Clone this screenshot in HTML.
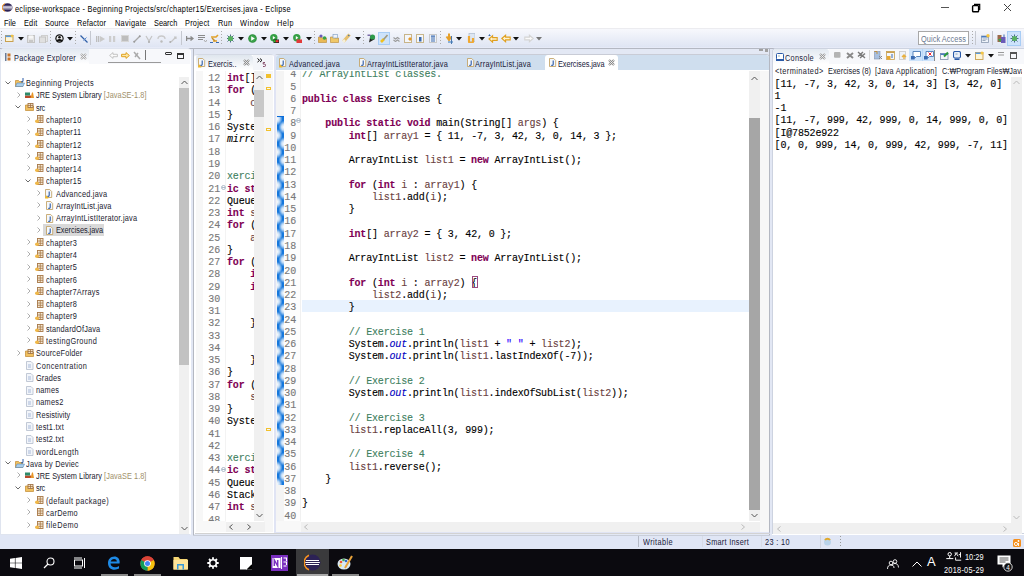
<!DOCTYPE html><html><head><meta charset="utf-8"><style>
*{margin:0;padding:0;box-sizing:border-box}
html,body{width:1024px;height:576px;overflow:hidden;background:#e2e7f4;position:relative}
.ui{position:absolute;font-family:"Liberation Sans", sans-serif;font-size:9px;letter-spacing:-0.5px;white-space:pre;line-height:12px;color:#000}
.mono{position:absolute;-webkit-text-stroke:0.12px currentColor;font-family:"Liberation Mono", monospace;font-size:10px;letter-spacing:-0.17px;white-space:pre;line-height:12.26px;color:#000}
.k{color:#7f0055;font-weight:bold}
.c{color:#3f7f5f}
.v{color:#6a3e3e}
.s{color:#2a00ff}
.f{color:#0000c0;font-style:italic}
.ln{color:#787878}
</style></head><body><div style="position:absolute;left:0px;top:0px;width:1024px;height:28px;background:#fff"></div><svg style="position:absolute;left:2px;top:3px" width="11" height="9" viewBox="0 0 11 9"><ellipse cx="5.5" cy="4.5" rx="5" ry="4.3" fill="#2c2255"/><path d="M1 3.3h9M0.6 4.6h9.8M1 5.9h9" stroke="#e9e7f0" stroke-width="0.9"/><path d="M3 0.6 A5 4.3 0 0 0 3 8.4" stroke="#f7941e" stroke-width="1" fill="none"/></svg><div class="ui" style="left:15px;top:2.7px;font-size:9.2px;letter-spacing:0.348px;transform:scaleX(0.8);transform-origin:0 0;">eclipse-workspace - Beginning Projects/src/chapter15/Exercises.java - Eclipse</div><div style="position:absolute;left:941px;top:7px;width:8px;height:1px;background:#555"></div><svg style="position:absolute;left:971px;top:3px" width="10" height="10" viewBox="0 0 10 10"><path d="M3 1.3h5.7v5.7" stroke="#000" stroke-width="1.2" fill="none"/><rect x="1.6" y="2.6" width="6" height="6.2" rx="0.8" stroke="#000" stroke-width="1.4" fill="none"/></svg><svg style="position:absolute;left:1003px;top:3px" width="9" height="9" viewBox="0 0 9 9"><path d="M1 1L8 8M8 1L1 8" stroke="#444" stroke-width="1"/></svg><div class="ui" style="left:4px;top:16.7px;font-size:9.2px;letter-spacing:0.048px;transform:scaleX(0.8);transform-origin:0 0;">File</div><div class="ui" style="left:23.5px;top:16.7px;font-size:9.2px;letter-spacing:0.260px;transform:scaleX(0.8);transform-origin:0 0;">Edit</div><div class="ui" style="left:45px;top:16.7px;font-size:9.2px;letter-spacing:0.147px;transform:scaleX(0.8);transform-origin:0 0;">Source</div><div class="ui" style="left:77px;top:16.7px;font-size:9.2px;letter-spacing:0.190px;transform:scaleX(0.8);transform-origin:0 0;">Refactor</div><div class="ui" style="left:114.6px;top:16.7px;font-size:9.2px;letter-spacing:0.372px;transform:scaleX(0.8);transform-origin:0 0;">Navigate</div><div class="ui" style="left:153.7px;top:16.7px;font-size:9.2px;letter-spacing:0.001px;transform:scaleX(0.8);transform-origin:0 0;">Search</div><div class="ui" style="left:185px;top:16.7px;font-size:9.2px;letter-spacing:0.307px;transform:scaleX(0.8);transform-origin:0 0;">Project</div><div class="ui" style="left:217.6px;top:16.7px;font-size:9.2px;letter-spacing:0.380px;transform:scaleX(0.8);transform-origin:0 0;">Run</div><div class="ui" style="left:239.5px;top:16.7px;font-size:9.2px;letter-spacing:0.698px;transform:scaleX(0.8);transform-origin:0 0;">Window</div><div class="ui" style="left:277px;top:16.7px;font-size:9.2px;letter-spacing:0.587px;transform:scaleX(0.8);transform-origin:0 0;">Help</div><div style="position:absolute;left:0px;top:28px;width:1024px;height:20px;background:linear-gradient(#f7f8fc,#dfe5f3);border-top:1px solid #ececf0;border-bottom:1px solid #e6eaf7"></div><div style="position:absolute;left:0px;top:48px;width:1024px;height:1px;background:#b2b6c1"></div><svg style="position:absolute;left:1px;top:31px" width="1" height="14" viewBox="0 0 1 14"><path d="M0.5 0v14" stroke="#aaa" stroke-width="1" stroke-dasharray="1 2"/></svg><svg style="position:absolute;left:5px;top:34px" width="9" height="8" viewBox="0 0 9 8"><rect x="0.5" y="1.5" width="7.5" height="6" fill="#fdf5d8" stroke="#c9a050" stroke-width="1"/><rect x="0.5" y="1.5" width="7.5" height="1.6" fill="#5a9ae0"/><path d="M7 0l0.6 1.2 1.3 0.2-1 0.9 0.3 1.3L7 3l-1.2 0.6 0.3-1.3-1-0.9 1.3-0.2z" fill="#f5c542"/></svg><svg style="position:absolute;left:17.5px;top:37px" width="6" height="4" viewBox="0 0 6 4"><path d="M0 0h6L3 3.5z" fill="#111"/></svg><svg style="position:absolute;left:27px;top:35px" width="8" height="8" viewBox="0 0 8 8"><rect x="0.5" y="0.5" width="7" height="7" fill="#e4e4e4" stroke="#c4c4c4"/><rect x="2" y="0.5" width="4" height="3" fill="#f6f6f6"/><rect x="2" y="5" width="4" height="2.5" fill="#c8c8c8"/></svg><svg style="position:absolute;left:39px;top:35px" width="9" height="8" viewBox="0 0 9 8"><rect x="2.5" y="0.5" width="6" height="6" fill="#e8e8e8" stroke="#cfcfcf"/><rect x="0.5" y="2" width="6" height="6" fill="#e0e0e0" stroke="#c4c4c4"/></svg><svg style="position:absolute;left:50px;top:31px" width="1" height="14" viewBox="0 0 1 14"><path d="M0.5 0v14" stroke="#aaa" stroke-width="1" stroke-dasharray="1 2"/></svg><svg style="position:absolute;left:55px;top:34px" width="9" height="9" viewBox="0 0 9 9"><circle cx="4.5" cy="4.5" r="4.2" fill="#111"/><circle cx="4.5" cy="4.5" r="3" fill="#f2f2f2"/><circle cx="4.5" cy="3.3" r="1.3" fill="#111"/><path d="M1.8 7.3a2.7 2.2 0 0 1 5.4 0z" fill="#111"/></svg><svg style="position:absolute;left:67px;top:37px" width="6" height="4" viewBox="0 0 6 4"><path d="M0 0h6L3 3.5z" fill="#111"/></svg><svg style="position:absolute;left:75px;top:31px" width="1" height="14" viewBox="0 0 1 14"><path d="M0.5 0v14" stroke="#aaa" stroke-width="1" stroke-dasharray="1 2"/></svg><svg style="position:absolute;left:80px;top:35px" width="8" height="8" viewBox="0 0 8 8"><path d="M0.5 0.5L7.5 7.5" stroke="#2f5fa8" stroke-width="1.2"/><path d="M3.5 5.5l3-3" stroke="#5a8ad0" stroke-width="1"/></svg><div style="position:absolute;left:90px;top:31px;width:1px;height:14px;background:#c5c8d0"></div><svg style="position:absolute;left:96px;top:36px" width="9" height="6" viewBox="0 0 9 6"><rect x="0" y="0" width="1.3" height="6" fill="#bdbdbd"/><rect x="2" y="0" width="1.3" height="6" fill="#bdbdbd"/><path d="M4 0l5 3-5 3z" fill="#c9c9c9"/></svg><svg style="position:absolute;left:109px;top:36px" width="7" height="6" viewBox="0 0 7 6"><rect x="0" y="0" width="2.2" height="6" fill="#cdcdcd"/><rect x="4" y="0" width="2.2" height="6" fill="#cdcdcd"/></svg><svg style="position:absolute;left:121px;top:35px" width="8" height="7" viewBox="0 0 8 7"><rect x="0.5" y="0.5" width="7" height="6" fill="#bdbdbd" stroke="#d6d6d6"/></svg><svg style="position:absolute;left:133px;top:35px" width="8" height="8" viewBox="0 0 8 8"><path d="M1 7l6-6" stroke="#a8a8a8" stroke-width="1.3"/><circle cx="1.2" cy="6.8" r="1" fill="#999"/><circle cx="6.8" cy="1.2" r="1" fill="#999"/></svg><svg style="position:absolute;left:145px;top:35px" width="9" height="8" viewBox="0 0 9 8"><path d="M1 1l3 5 3-5" stroke="#c4c4c4" stroke-width="1.2" fill="none"/><circle cx="4" cy="7" r="1" fill="#aaa"/></svg><svg style="position:absolute;left:157px;top:35px" width="9" height="8" viewBox="0 0 9 8"><path d="M1 4a3.5 3 0 0 1 7 0" stroke="#c9c9c9" stroke-width="1.3" fill="none"/><circle cx="4.5" cy="6.5" r="1.2" fill="#bbb"/></svg><svg style="position:absolute;left:169px;top:35px" width="9" height="8" viewBox="0 0 9 8"><path d="M2 7l5-5M5 2h2v2" stroke="#c4c4c4" stroke-width="1.2" fill="none"/><circle cx="1.2" cy="7" r="0.9" fill="#aaa"/></svg><div style="position:absolute;left:181px;top:31px;width:1px;height:14px;background:#c5c8d0"></div><svg style="position:absolute;left:186px;top:35px" width="8" height="7" viewBox="0 0 8 7"><path d="M0.5 1v5M1 3.5h5M4.5 1.5l2.5 2-2.5 2" stroke="#8a8a8a" stroke-width="1.4" fill="none"/></svg><svg style="position:absolute;left:198px;top:34px" width="9" height="9" viewBox="0 0 9 9"><path d="M0 1.5h7M0 3.5h7M0 5.5h5" stroke="#8a8a8a" stroke-width="1"/><path d="M6 6l1.5 2 1.5-2" stroke="#aaa" stroke-width="1" fill="none"/></svg><svg style="position:absolute;left:210px;top:34px" width="9" height="9" viewBox="0 0 9 9"><path d="M1 3h5l2-2M3 7h4" stroke="#e2a22a" stroke-width="1.6" fill="none"/><path d="M2 4l3 3" stroke="#c8902a" stroke-width="1.5"/><path d="M0 8.5h3M6 8.5h3" stroke="#3a6ab0" stroke-width="1"/></svg><svg style="position:absolute;left:221px;top:31px" width="1" height="14" viewBox="0 0 1 14"><path d="M0.5 0v14" stroke="#aaa" stroke-width="1" stroke-dasharray="1 2"/></svg><svg style="position:absolute;left:226px;top:34px" width="9" height="9" viewBox="0 0 9 9"><path d="M1 4.5h7M4.5 0.5v8M1.5 1.5l6 6M7.5 1.5l-6 6" stroke="#3a5a7a" stroke-width="0.9"/><circle cx="4.5" cy="4.5" r="2.6" fill="#58b060"/></svg><svg style="position:absolute;left:238px;top:37px" width="6" height="4" viewBox="0 0 6 4"><path d="M0 0h6L3 3.5z" fill="#111"/></svg><svg style="position:absolute;left:248px;top:34px" width="9" height="9" viewBox="0 0 9 9"><circle cx="4.5" cy="4.5" r="4.3" fill="#2c8a3a"/><circle cx="4.5" cy="4.5" r="3.5" fill="#3aa24a"/><path d="M3.2 2.2L6.8 4.5 3.2 6.8z" fill="#fff"/></svg><svg style="position:absolute;left:261px;top:37px" width="6" height="4" viewBox="0 0 6 4"><path d="M0 0h6L3 3.5z" fill="#111"/></svg><svg style="position:absolute;left:270px;top:34px" width="9" height="9" viewBox="0 0 9 9"><circle cx="3.8" cy="3.8" r="3.7" fill="#35a045"/><path d="M2.8 2l2.6 1.8-2.6 1.8z" fill="#fff"/><rect x="3.5" y="5.5" width="5.5" height="3.5" fill="#222"/><rect x="5.5" y="6.2" width="3" height="2" fill="#e33"/><rect x="3.8" y="6.2" width="1.6" height="2" fill="#2c2"/></svg><svg style="position:absolute;left:283px;top:37px" width="6" height="4" viewBox="0 0 6 4"><path d="M0 0h6L3 3.5z" fill="#111"/></svg><svg style="position:absolute;left:293px;top:34px" width="9" height="9" viewBox="0 0 9 9"><circle cx="3.8" cy="3.8" r="3.7" fill="#35a045"/><path d="M2.8 2l2.6 1.8-2.6 1.8z" fill="#fff"/><rect x="3.5" y="5.5" width="5.5" height="3.5" fill="#e23a3a"/></svg><svg style="position:absolute;left:306px;top:37px" width="6" height="4" viewBox="0 0 6 4"><path d="M0 0h6L3 3.5z" fill="#111"/></svg><svg style="position:absolute;left:314px;top:31px" width="1" height="14" viewBox="0 0 1 14"><path d="M0.5 0v14" stroke="#aaa" stroke-width="1" stroke-dasharray="1 2"/></svg><svg style="position:absolute;left:318px;top:34px" width="9" height="9" viewBox="0 0 9 9"><path d="M0.5 3h3l1 1h4v4.5h-8z" fill="#e9b955" stroke="#b88830" stroke-width="0.6"/><circle cx="3" cy="2" r="1.6" fill="#6a5ab8"/><circle cx="6.5" cy="4" r="1.8" fill="#3aa24a"/></svg><svg style="position:absolute;left:330px;top:34px" width="9" height="9" viewBox="0 0 9 9"><path d="M0.5 3h3l1 1h4v4.5h-8z" fill="#f0c868" stroke="#b88830" stroke-width="0.6"/><rect x="3" y="0.5" width="4.5" height="3.5" fill="#eef3fa" stroke="#7a9ac0" stroke-width="0.6"/></svg><svg style="position:absolute;left:342px;top:33px" width="9" height="10" viewBox="0 0 9 10"><path d="M1.5 8.5L7.5 1.5" stroke="#e6c070" stroke-width="3.2"/><path d="M1 9l2-2" stroke="#f5efd8" stroke-width="2.5"/><circle cx="6.8" cy="2.5" r="0.7" fill="#3a6ab0"/></svg><svg style="position:absolute;left:355px;top:37px" width="6" height="4" viewBox="0 0 6 4"><path d="M0 0h6L3 3.5z" fill="#111"/></svg><svg style="position:absolute;left:363px;top:31px" width="1" height="14" viewBox="0 0 1 14"><path d="M0.5 0v14" stroke="#aaa" stroke-width="1" stroke-dasharray="1 2"/></svg><svg style="position:absolute;left:367px;top:34px" width="9" height="9" viewBox="0 0 9 9"><path d="M2 8.5L3.5 1 8 5z" fill="#222"/><circle cx="5.5" cy="3" r="2.6" fill="#2e9a4a"/><rect x="0.5" y="0.5" width="3" height="1.5" fill="#7a6aa8"/></svg><div style="position:absolute;left:378px;top:32px;width:12px;height:13px;background:#cde3fb;border:1px solid #a8cdf5"></div><svg style="position:absolute;left:380px;top:34px" width="8" height="9" viewBox="0 0 8 9"><path d="M1 8l3-3" stroke="#f0c020" stroke-width="2.6"/><path d="M3.5 5.5L7.5 1" stroke="#a09a80" stroke-width="1.6"/></svg><svg style="position:absolute;left:393px;top:35px" width="8" height="7" viewBox="0 0 8 7"><path d="M0.5 2.5l2 1.5 2-1.5 2 1.5M0.5 5l2 1.5 2-1.5 2 1.5" stroke="#9a9a9a" stroke-width="1.1" fill="none"/></svg><svg style="position:absolute;left:404px;top:34px" width="9" height="9" viewBox="0 0 9 9"><rect x="0.5" y="0.5" width="7" height="8" fill="#f4f6fa" stroke="#c8b488"/><path d="M4 5l2-2 2 2-2 2z" fill="#e59a2a"/></svg><svg style="position:absolute;left:416px;top:34px" width="8" height="9" viewBox="0 0 8 9"><rect x="0.5" y="0.5" width="7" height="8" fill="#f4f6fa" stroke="#c9b78c"/><rect x="3" y="3" width="2.5" height="4.5" fill="#3a6ab0"/></svg><svg style="position:absolute;left:429px;top:34px" width="8" height="9" viewBox="0 0 8 9"><rect x="0.5" y="0.5" width="7" height="8" fill="#eef2f8" stroke="#c9c9c9"/><path d="M3 2v6M5 2v6M2 2h4" stroke="#3a6ab0" stroke-width="1"/></svg><svg style="position:absolute;left:440px;top:31px" width="1" height="14" viewBox="0 0 1 14"><path d="M0.5 0v14" stroke="#aaa" stroke-width="1" stroke-dasharray="1 2"/></svg><svg style="position:absolute;left:445px;top:33px" width="8" height="10" viewBox="0 0 8 10"><path d="M4 0.5v5M1.5 3.5L4 7l2.5-3.5" stroke="#e6a02a" stroke-width="2" fill="none"/><rect x="3" y="8" width="5" height="2" fill="#8ab0d8"/></svg><div style="position:absolute;left:451px;top:36px;width:1px;height:8px;background:#4a78b0"></div><svg style="position:absolute;left:456px;top:37px" width="6" height="4" viewBox="0 0 6 4"><path d="M0 0h6L3 3.5z" fill="#111"/></svg><svg style="position:absolute;left:467px;top:33px" width="8" height="10" viewBox="0 0 8 10"><rect x="2" y="0.5" width="6" height="8" fill="#dde6f2" stroke="#b4c0d0" stroke-width="0.8"/><path d="M2 3v5a2 2 0 0 0 4 0V5" stroke="#f0a830" stroke-width="2.2" fill="none"/></svg><svg style="position:absolute;left:479px;top:37px" width="6" height="4" viewBox="0 0 6 4"><path d="M0 0h6L3 3.5z" fill="#111"/></svg><svg style="position:absolute;left:488px;top:33.5px" width="10" height="9" viewBox="0 0 10 9"><path d="M1 5L4.6 1.8v1.8h4.6v2.8H4.6v1.8z" fill="#fff4d0" stroke="#e0a020" stroke-width="1.1"/><path d="M1.5 0l1.3 2h-2.6z" fill="#3a6ab0"/></svg><svg style="position:absolute;left:501px;top:33.5px" width="10" height="9" viewBox="0 0 10 9"><path d="M0.8 4.5L4.6 1.3v1.8h4.6v2.8H4.6v1.8z" fill="#fff4d0" stroke="#e0a020" stroke-width="1.1"/></svg><svg style="position:absolute;left:513px;top:37px" width="6" height="4" viewBox="0 0 6 4"><path d="M0 0h6L3 3.5z" fill="#111"/></svg><svg style="position:absolute;left:523.5px;top:33.5px" width="10" height="9" viewBox="0 0 10 9"><path d="M9.2 4.5L5.4 1.3v1.8H0.8v2.8h4.6v1.8z" fill="#fafafa" stroke="#d4d4d4" stroke-width="1.1"/></svg><svg style="position:absolute;left:536px;top:37px" width="6" height="4" viewBox="0 0 6 4"><path d="M0 0h6L3 3.5z" fill="#777"/></svg><div style="position:absolute;left:918px;top:31px;width:51px;height:14px;background:#fff;border:1px solid #a8a8a8"></div><div class="ui" style="left:921px;top:32.5px;font-size:9.2px;letter-spacing:0.091px;transform:scaleX(0.8);transform-origin:0 0;color:#6a7890">Quick Access</div><svg style="position:absolute;left:972px;top:31px" width="1" height="14" viewBox="0 0 1 14"><path d="M0.5 0v14" stroke="#aaa" stroke-width="1" stroke-dasharray="1 2"/></svg><div style="position:absolute;left:975px;top:31px;width:1px;height:14px;background:#c5c8d0"></div><svg style="position:absolute;left:981px;top:34px" width="9" height="9" viewBox="0 0 9 9"><rect x="0.5" y="2" width="7" height="6.5" fill="#eef3fa" stroke="#8a9ab0" stroke-width="0.8"/><rect x="0.5" y="2" width="7" height="1.5" fill="#4a7ac0"/><path d="M1.5 5h5M1.5 6.5h3" stroke="#7a8aa0" stroke-width="0.7"/><circle cx="7" cy="1.8" r="1.7" fill="#f5c542"/></svg><div style="position:absolute;left:992px;top:31px;width:1px;height:14px;background:#c5c8d0"></div><svg style="position:absolute;left:997px;top:34px" width="9" height="9" viewBox="0 0 9 9"><rect x="0.5" y="1" width="4" height="7" fill="#9a6a4a"/><rect x="4" y="3" width="4.5" height="6" fill="#6a5ab8"/><path d="M1 5l2 3 2-3z" fill="#3aa24a"/><path d="M7 0.5v2.5" stroke="#3a6ab0" stroke-width="1"/></svg><div style="position:absolute;left:1007px;top:31px;width:14px;height:15px;background:#cde3fb;border:1px solid #a8cdf5"></div><svg style="position:absolute;left:1009.5px;top:34px" width="9" height="9" viewBox="0 0 9 9"><path d="M0.5 4.5h8M4.5 0.5v8M1.5 1.5l6 6M7.5 1.5l-6 6" stroke="#3a5a7a" stroke-width="0.9"/><circle cx="4.5" cy="4.5" r="2.6" fill="#58b060"/></svg><div style="position:absolute;left:0px;top:48px;width:191px;height:487px;background:#fff;border:1px solid #dfe4ef;border-right-color:#fff;border-radius:4px 4px 0 0"></div><div style="position:absolute;left:1px;top:49px;width:89px;height:15px;background:linear-gradient(#e3e9f1,#ffffff);border-radius:3px 3px 0 0"></div><div style="position:absolute;left:89px;top:49px;width:101px;height:15px;background:#f7f8fb;border-radius:0 3px 0 0"></div><svg style="position:absolute;left:5px;top:53px" width="6" height="8" viewBox="0 0 6 8"><rect x="0" y="0" width="1.5" height="8" fill="#6a7a94"/><rect x="2.5" y="0.5" width="3" height="3" fill="#c8742a"/><rect x="2.5" y="4.5" width="3" height="3" fill="#c8742a"/></svg><div class="ui" style="left:13.5px;top:51.5px;font-size:9.2px;letter-spacing:0.310px;transform:scaleX(0.8);transform-origin:0 0;color:#1a1a3a">Package Explorer</div><svg style="position:absolute;left:80px;top:52.5px" width="7" height="7" viewBox="0 0 7 7"><path d="M1 1l5 5M6 1l-5 5" stroke="#a8a8a8" stroke-width="2.2"/><path d="M1 1l5 5M6 1l-5 5" stroke="#fff" stroke-width="0.7"/></svg><svg style="position:absolute;left:109px;top:52px" width="9" height="7" viewBox="0 0 9 7"><path d="M0.6 3.5L4 0.6v1.7h4.4v2.4H4v1.7z" fill="#fafafa" stroke="#bdbdbd" stroke-width="0.9"/></svg><svg style="position:absolute;left:121px;top:52px" width="9" height="7" viewBox="0 0 9 7"><path d="M8.4 3.5L5 0.6v1.7H0.6v2.4H5v1.7z" fill="#fde9a8" stroke="#e0a020" stroke-width="1"/></svg><svg style="position:absolute;left:133px;top:51px" width="8" height="9" viewBox="0 0 8 9"><path d="M1 1l6 7M2 6l3-4" stroke="#aaa" stroke-width="1.5"/></svg><div style="position:absolute;left:145px;top:50px;width:1px;height:10px;background:#777"></div><div style="position:absolute;left:108px;top:62px;width:53px;height:1px;background:#9a9a9a"></div><div style="position:absolute;left:165px;top:52px;width:7px;height:3px;border:1px solid #333;border-radius:1px"></div><div style="position:absolute;left:177px;top:53px;width:7px;height:6px;border:1px solid #333;border-top-width:2px"></div><div style="position:absolute;left:179px;top:77px;width:10px;height:457px;background:#f0f0f0"></div><svg style="position:absolute;left:180.5px;top:80px" width="7" height="5" viewBox="0 0 7 5"><path d="M0.5 4L3.5 1l3 3" stroke="#555" stroke-width="1" fill="none"/></svg><div style="position:absolute;left:179px;top:88px;width:10px;height:277px;background:#c2c2c2"></div><svg style="position:absolute;left:180.5px;top:526px" width="7" height="5" viewBox="0 0 7 5"><path d="M0.5 1L3.5 4l3-3" stroke="#555" stroke-width="1" fill="none"/></svg><div style="position:absolute;left:1px;top:64px;width:178px;height:470px;overflow:hidden"><svg style="position:absolute;left:4px;top:16.5px" width="6" height="4" viewBox="0 0 6 4"><path d="M0.5 0.5L3 3l2.5-2.5" stroke="#6b6b6b" stroke-width="1" fill="none"/></svg><svg style="position:absolute;left:13.5px;top:14.0px" width="10" height="9" viewBox="0 0 10 9"><path d="M0.5 2.5h3l1 1h3v5h-7z" fill="#f0c060" stroke="#c08a30" stroke-width="0.7"/><path d="M2 5h7.5l-1.5 3.5H0.5z" fill="#a9cdea" stroke="#5a8ab8" stroke-width="0.6"/><path d="M8 0v3.5l-2 0.5" stroke="#2a5aa8" stroke-width="1" fill="none"/></svg><div class="ui" style="left:24.5px;top:13.1px;font-size:9.2px;letter-spacing:0.465px;transform:scaleX(0.8);transform-origin:0 0;color:#1a1a2e">Beginning Projects</div><svg style="position:absolute;left:16px;top:27.78px" width="4" height="6" viewBox="0 0 4 6"><path d="M0.5 0.5L3 3L0.5 5.5" stroke="#a4a4a4" stroke-width="0.9" fill="none"/></svg><svg style="position:absolute;left:23.5px;top:27.78px" width="9" height="6" viewBox="0 0 9 6"><rect x="0" y="3.5" width="6" height="2.5" fill="#b84a2a"/><rect x="0" y="0.5" width="5" height="3" fill="#2f8a6a"/><path d="M5.5 6L7 0.5h1L9 6z" fill="#e8962a"/></svg><div class="ui" style="left:34.5px;top:25.380000000000003px;font-size:9.2px;letter-spacing:0.057px;transform:scaleX(0.8);transform-origin:0 0;color:#1a1a2e">JRE System Library<span style="color:#a0906a"> [JavaSE-1.8]</span></div><svg style="position:absolute;left:14px;top:41.06px" width="6" height="4" viewBox="0 0 6 4"><path d="M0.5 0.5L3 3l2.5-2.5" stroke="#6b6b6b" stroke-width="1" fill="none"/></svg><svg style="position:absolute;left:23.5px;top:39.06px" width="10" height="8" viewBox="0 0 10 8"><path d="M0.5 2h3l1 1h4v4.5h-8z" fill="#f0c060" stroke="#c08a30" stroke-width="0.7"/><rect x="3" y="0.5" width="5" height="4" fill="#f3e2c4" stroke="#9b6a3a" stroke-width="0.8"/><path d="M5.5 0.5v4M3 2.5h5" stroke="#9b6a3a" stroke-width="0.7"/></svg><div class="ui" style="left:34.5px;top:37.660000000000004px;font-size:9.2px;letter-spacing:-0.333px;transform:scaleX(0.8);transform-origin:0 0;color:#1a1a2e">src</div><svg style="position:absolute;left:26px;top:52.34px" width="4" height="6" viewBox="0 0 4 6"><path d="M0.5 0.5L3 3L0.5 5.5" stroke="#a4a4a4" stroke-width="0.9" fill="none"/></svg><svg style="position:absolute;left:33.5px;top:51.34px" width="9" height="8" viewBox="0 0 9 8"><rect x="2.5" y="0.5" width="5.5" height="7" fill="#f6ead6" stroke="#a77848" stroke-width="0.9"/><path d="M5.25 0.5v7M2.5 3h5.5M2.5 5.3h5.5" stroke="#a77848" stroke-width="0.8"/><ellipse cx="2" cy="6.3" rx="2" ry="1.7" fill="#f0b848"/></svg><div class="ui" style="left:44.5px;top:49.940000000000005px;font-size:9.2px;letter-spacing:0.403px;transform:scaleX(0.8);transform-origin:0 0;color:#1a1a2e">chapter10</div><svg style="position:absolute;left:26px;top:64.62px" width="4" height="6" viewBox="0 0 4 6"><path d="M0.5 0.5L3 3L0.5 5.5" stroke="#a4a4a4" stroke-width="0.9" fill="none"/></svg><svg style="position:absolute;left:33.5px;top:63.620000000000005px" width="9" height="8" viewBox="0 0 9 8"><rect x="2.5" y="0.5" width="5.5" height="7" fill="#f6ead6" stroke="#a77848" stroke-width="0.9"/><path d="M5.25 0.5v7M2.5 3h5.5M2.5 5.3h5.5" stroke="#a77848" stroke-width="0.8"/><ellipse cx="2" cy="6.3" rx="2" ry="1.7" fill="#f0b848"/></svg><div class="ui" style="left:44.5px;top:62.220000000000006px;font-size:9.2px;letter-spacing:0.479px;transform:scaleX(0.8);transform-origin:0 0;color:#1a1a2e">chapter11</div><svg style="position:absolute;left:26px;top:76.9px" width="4" height="6" viewBox="0 0 4 6"><path d="M0.5 0.5L3 3L0.5 5.5" stroke="#a4a4a4" stroke-width="0.9" fill="none"/></svg><svg style="position:absolute;left:33.5px;top:75.9px" width="9" height="8" viewBox="0 0 9 8"><rect x="2.5" y="0.5" width="5.5" height="7" fill="#f6ead6" stroke="#a77848" stroke-width="0.9"/><path d="M5.25 0.5v7M2.5 3h5.5M2.5 5.3h5.5" stroke="#a77848" stroke-width="0.8"/><ellipse cx="2" cy="6.3" rx="2" ry="1.7" fill="#f0b848"/></svg><div class="ui" style="left:44.5px;top:74.5px;font-size:9.2px;letter-spacing:0.403px;transform:scaleX(0.8);transform-origin:0 0;color:#1a1a2e">chapter12</div><svg style="position:absolute;left:26px;top:89.18px" width="4" height="6" viewBox="0 0 4 6"><path d="M0.5 0.5L3 3L0.5 5.5" stroke="#a4a4a4" stroke-width="0.9" fill="none"/></svg><svg style="position:absolute;left:33.5px;top:88.18px" width="9" height="8" viewBox="0 0 9 8"><rect x="2.5" y="0.5" width="5.5" height="7" fill="#f6ead6" stroke="#a77848" stroke-width="0.9"/><path d="M5.25 0.5v7M2.5 3h5.5M2.5 5.3h5.5" stroke="#a77848" stroke-width="0.8"/><ellipse cx="2" cy="6.3" rx="2" ry="1.7" fill="#f0b848"/></svg><div class="ui" style="left:44.5px;top:86.78px;font-size:9.2px;letter-spacing:0.403px;transform:scaleX(0.8);transform-origin:0 0;color:#1a1a2e">chapter13</div><svg style="position:absolute;left:26px;top:101.45999999999998px" width="4" height="6" viewBox="0 0 4 6"><path d="M0.5 0.5L3 3L0.5 5.5" stroke="#a4a4a4" stroke-width="0.9" fill="none"/></svg><svg style="position:absolute;left:33.5px;top:100.45999999999998px" width="9" height="8" viewBox="0 0 9 8"><rect x="2.5" y="0.5" width="5.5" height="7" fill="#f6ead6" stroke="#a77848" stroke-width="0.9"/><path d="M5.25 0.5v7M2.5 3h5.5M2.5 5.3h5.5" stroke="#a77848" stroke-width="0.8"/><ellipse cx="2" cy="6.3" rx="2" ry="1.7" fill="#f0b848"/></svg><div class="ui" style="left:44.5px;top:99.05999999999997px;font-size:9.2px;letter-spacing:0.403px;transform:scaleX(0.8);transform-origin:0 0;color:#1a1a2e">chapter14</div><svg style="position:absolute;left:24px;top:114.74000000000001px" width="6" height="4" viewBox="0 0 6 4"><path d="M0.5 0.5L3 3l2.5-2.5" stroke="#6b6b6b" stroke-width="1" fill="none"/></svg><svg style="position:absolute;left:33.5px;top:112.74000000000001px" width="9" height="8" viewBox="0 0 9 8"><rect x="2.5" y="0.5" width="5.5" height="7" fill="#f6ead6" stroke="#a77848" stroke-width="0.9"/><path d="M5.25 0.5v7M2.5 3h5.5M2.5 5.3h5.5" stroke="#a77848" stroke-width="0.8"/><ellipse cx="2" cy="6.3" rx="2" ry="1.7" fill="#f0b848"/></svg><div class="ui" style="left:44.5px;top:111.34px;font-size:9.2px;letter-spacing:0.403px;transform:scaleX(0.8);transform-origin:0 0;color:#1a1a2e">chapter15</div><svg style="position:absolute;left:36px;top:126.01999999999998px" width="4" height="6" viewBox="0 0 4 6"><path d="M0.5 0.5L3 3L0.5 5.5" stroke="#a4a4a4" stroke-width="0.9" fill="none"/></svg><svg style="position:absolute;left:43.5px;top:125.01999999999998px" width="8" height="10" viewBox="0 0 8 10"><path d="M0.5 0.5h4.2l2 2v6h-6.2z" fill="#f4f7fb" stroke="#bf9c58" stroke-width="0.8"/><path d="M4.2 2.5v3.8c0 1.1-0.9 1.3-1.9 0.9" stroke="#2a5aa8" stroke-width="1.1" fill="none"/><path d="M-0.5 9.5l2-3.3 2 3.3z" fill="#f0b828"/></svg><div class="ui" style="left:54.5px;top:123.61999999999998px;font-size:9.2px;letter-spacing:0.295px;transform:scaleX(0.8);transform-origin:0 0;color:#1a1a2e">Advanced.java</div><svg style="position:absolute;left:36px;top:138.3px" width="4" height="6" viewBox="0 0 4 6"><path d="M0.5 0.5L3 3L0.5 5.5" stroke="#a4a4a4" stroke-width="0.9" fill="none"/></svg><svg style="position:absolute;left:44.5px;top:137.3px" width="8" height="10" viewBox="0 0 8 10"><path d="M0.5 0.5h4.2l2 2v6h-6.2z" fill="#f4f7fb" stroke="#bf9c58" stroke-width="0.8"/><path d="M4.2 2.5v3.8c0 1.1-0.9 1.3-1.9 0.9" stroke="#2a5aa8" stroke-width="1.1" fill="none"/></svg><div class="ui" style="left:54.5px;top:135.9px;font-size:9.2px;letter-spacing:0.213px;transform:scaleX(0.8);transform-origin:0 0;color:#1a1a2e">ArrayIntList.java</div><svg style="position:absolute;left:36px;top:150.57999999999998px" width="4" height="6" viewBox="0 0 4 6"><path d="M0.5 0.5L3 3L0.5 5.5" stroke="#a4a4a4" stroke-width="0.9" fill="none"/></svg><svg style="position:absolute;left:44.5px;top:149.57999999999998px" width="8" height="10" viewBox="0 0 8 10"><path d="M0.5 0.5h4.2l2 2v6h-6.2z" fill="#f4f7fb" stroke="#bf9c58" stroke-width="0.8"/><path d="M4.2 2.5v3.8c0 1.1-0.9 1.3-1.9 0.9" stroke="#2a5aa8" stroke-width="1.1" fill="none"/></svg><div class="ui" style="left:54.5px;top:148.17999999999998px;font-size:9.2px;letter-spacing:0.285px;transform:scaleX(0.8);transform-origin:0 0;color:#1a1a2e">ArrayIntListIterator.java</div><div style="position:absolute;left:42px;top:159.85999999999999px;width:61px;height:12.5px;background:#d9d9d9"></div><svg style="position:absolute;left:36px;top:162.85999999999999px" width="4" height="6" viewBox="0 0 4 6"><path d="M0.5 0.5L3 3L0.5 5.5" stroke="#a4a4a4" stroke-width="0.9" fill="none"/></svg><svg style="position:absolute;left:44.5px;top:161.85999999999999px" width="8" height="10" viewBox="0 0 8 10"><path d="M0.5 0.5h4.2l2 2v6h-6.2z" fill="#f4f7fb" stroke="#bf9c58" stroke-width="0.8"/><path d="M4.2 2.5v3.8c0 1.1-0.9 1.3-1.9 0.9" stroke="#2a5aa8" stroke-width="1.1" fill="none"/></svg><div class="ui" style="left:54.5px;top:160.45999999999998px;font-size:9.2px;letter-spacing:-0.035px;transform:scaleX(0.8);transform-origin:0 0;color:#1a1a2e">Exercises.java</div><svg style="position:absolute;left:26px;top:175.14px" width="4" height="6" viewBox="0 0 4 6"><path d="M0.5 0.5L3 3L0.5 5.5" stroke="#a4a4a4" stroke-width="0.9" fill="none"/></svg><svg style="position:absolute;left:33.5px;top:174.14px" width="9" height="8" viewBox="0 0 9 8"><rect x="2.5" y="0.5" width="5.5" height="7" fill="#f6ead6" stroke="#a77848" stroke-width="0.9"/><path d="M5.25 0.5v7M2.5 3h5.5M2.5 5.3h5.5" stroke="#a77848" stroke-width="0.8"/><ellipse cx="2" cy="6.3" rx="2" ry="1.7" fill="#f0b848"/></svg><div class="ui" style="left:44.5px;top:172.73999999999998px;font-size:9.2px;letter-spacing:0.420px;transform:scaleX(0.8);transform-origin:0 0;color:#1a1a2e">chapter3</div><svg style="position:absolute;left:26px;top:187.42px" width="4" height="6" viewBox="0 0 4 6"><path d="M0.5 0.5L3 3L0.5 5.5" stroke="#a4a4a4" stroke-width="0.9" fill="none"/></svg><svg style="position:absolute;left:33.5px;top:186.42px" width="9" height="8" viewBox="0 0 9 8"><rect x="2.5" y="0.5" width="5.5" height="7" fill="#f6ead6" stroke="#a77848" stroke-width="0.9"/><path d="M5.25 0.5v7M2.5 3h5.5M2.5 5.3h5.5" stroke="#a77848" stroke-width="0.8"/><ellipse cx="2" cy="6.3" rx="2" ry="1.7" fill="#f0b848"/></svg><div class="ui" style="left:44.5px;top:185.01999999999998px;font-size:9.2px;letter-spacing:0.420px;transform:scaleX(0.8);transform-origin:0 0;color:#1a1a2e">chapter4</div><svg style="position:absolute;left:26px;top:199.7px" width="4" height="6" viewBox="0 0 4 6"><path d="M0.5 0.5L3 3L0.5 5.5" stroke="#a4a4a4" stroke-width="0.9" fill="none"/></svg><svg style="position:absolute;left:33.5px;top:198.7px" width="9" height="8" viewBox="0 0 9 8"><rect x="2.5" y="0.5" width="5.5" height="7" fill="#f6ead6" stroke="#a77848" stroke-width="0.9"/><path d="M5.25 0.5v7M2.5 3h5.5M2.5 5.3h5.5" stroke="#a77848" stroke-width="0.8"/><ellipse cx="2" cy="6.3" rx="2" ry="1.7" fill="#f0b848"/></svg><div class="ui" style="left:44.5px;top:197.29999999999998px;font-size:9.2px;letter-spacing:0.420px;transform:scaleX(0.8);transform-origin:0 0;color:#1a1a2e">chapter5</div><svg style="position:absolute;left:26px;top:211.98000000000002px" width="4" height="6" viewBox="0 0 4 6"><path d="M0.5 0.5L3 3L0.5 5.5" stroke="#a4a4a4" stroke-width="0.9" fill="none"/></svg><svg style="position:absolute;left:33.5px;top:210.98000000000002px" width="9" height="8" viewBox="0 0 9 8"><rect x="2.5" y="0.5" width="5.5" height="7" fill="#f6ead6" stroke="#a77848" stroke-width="0.9"/><path d="M5.25 0.5v7M2.5 3h5.5M2.5 5.3h5.5" stroke="#a77848" stroke-width="0.8"/></svg><div class="ui" style="left:44.5px;top:209.58px;font-size:9.2px;letter-spacing:0.420px;transform:scaleX(0.8);transform-origin:0 0;color:#1a1a2e">chapter6</div><svg style="position:absolute;left:26px;top:224.26px" width="4" height="6" viewBox="0 0 4 6"><path d="M0.5 0.5L3 3L0.5 5.5" stroke="#a4a4a4" stroke-width="0.9" fill="none"/></svg><svg style="position:absolute;left:33.5px;top:223.26px" width="9" height="8" viewBox="0 0 9 8"><rect x="2.5" y="0.5" width="5.5" height="7" fill="#f6ead6" stroke="#a77848" stroke-width="0.9"/><path d="M5.25 0.5v7M2.5 3h5.5M2.5 5.3h5.5" stroke="#a77848" stroke-width="0.8"/><ellipse cx="2" cy="6.3" rx="2" ry="1.7" fill="#f0b848"/></svg><div class="ui" style="left:44.5px;top:221.85999999999999px;font-size:9.2px;letter-spacing:0.352px;transform:scaleX(0.8);transform-origin:0 0;color:#1a1a2e">chapter7Arrays</div><svg style="position:absolute;left:26px;top:236.53999999999996px" width="4" height="6" viewBox="0 0 4 6"><path d="M0.5 0.5L3 3L0.5 5.5" stroke="#a4a4a4" stroke-width="0.9" fill="none"/></svg><svg style="position:absolute;left:33.5px;top:235.53999999999996px" width="9" height="8" viewBox="0 0 9 8"><rect x="2.5" y="0.5" width="5.5" height="7" fill="#f6ead6" stroke="#a77848" stroke-width="0.9"/><path d="M5.25 0.5v7M2.5 3h5.5M2.5 5.3h5.5" stroke="#a77848" stroke-width="0.8"/></svg><div class="ui" style="left:44.5px;top:234.13999999999996px;font-size:9.2px;letter-spacing:0.420px;transform:scaleX(0.8);transform-origin:0 0;color:#1a1a2e">chapter8</div><svg style="position:absolute;left:26px;top:248.82px" width="4" height="6" viewBox="0 0 4 6"><path d="M0.5 0.5L3 3L0.5 5.5" stroke="#a4a4a4" stroke-width="0.9" fill="none"/></svg><svg style="position:absolute;left:33.5px;top:247.82px" width="9" height="8" viewBox="0 0 9 8"><rect x="2.5" y="0.5" width="5.5" height="7" fill="#f6ead6" stroke="#a77848" stroke-width="0.9"/><path d="M5.25 0.5v7M2.5 3h5.5M2.5 5.3h5.5" stroke="#a77848" stroke-width="0.8"/><ellipse cx="2" cy="6.3" rx="2" ry="1.7" fill="#f0b848"/></svg><div class="ui" style="left:44.5px;top:246.42px;font-size:9.2px;letter-spacing:0.420px;transform:scaleX(0.8);transform-origin:0 0;color:#1a1a2e">chapter9</div><svg style="position:absolute;left:26px;top:261.1px" width="4" height="6" viewBox="0 0 4 6"><path d="M0.5 0.5L3 3L0.5 5.5" stroke="#a4a4a4" stroke-width="0.9" fill="none"/></svg><svg style="position:absolute;left:33.5px;top:260.1px" width="9" height="8" viewBox="0 0 9 8"><rect x="2.5" y="0.5" width="5.5" height="7" fill="#f6ead6" stroke="#a77848" stroke-width="0.9"/><path d="M5.25 0.5v7M2.5 3h5.5M2.5 5.3h5.5" stroke="#a77848" stroke-width="0.8"/><ellipse cx="2" cy="6.3" rx="2" ry="1.7" fill="#f0b848"/></svg><div class="ui" style="left:44.5px;top:258.70000000000005px;font-size:9.2px;letter-spacing:0.223px;transform:scaleX(0.8);transform-origin:0 0;color:#1a1a2e">standardOfJava</div><svg style="position:absolute;left:26px;top:273.38px" width="4" height="6" viewBox="0 0 4 6"><path d="M0.5 0.5L3 3L0.5 5.5" stroke="#a4a4a4" stroke-width="0.9" fill="none"/></svg><svg style="position:absolute;left:33.5px;top:272.38px" width="9" height="8" viewBox="0 0 9 8"><rect x="2.5" y="0.5" width="5.5" height="7" fill="#f6ead6" stroke="#a77848" stroke-width="0.9"/><path d="M5.25 0.5v7M2.5 3h5.5M2.5 5.3h5.5" stroke="#a77848" stroke-width="0.8"/><ellipse cx="2" cy="6.3" rx="2" ry="1.7" fill="#f0b848"/></svg><div class="ui" style="left:44.5px;top:270.98px;font-size:9.2px;letter-spacing:0.492px;transform:scaleX(0.8);transform-origin:0 0;color:#1a1a2e">testingGround</div><svg style="position:absolute;left:16px;top:285.65999999999997px" width="4" height="6" viewBox="0 0 4 6"><path d="M0.5 0.5L3 3L0.5 5.5" stroke="#a4a4a4" stroke-width="0.9" fill="none"/></svg><svg style="position:absolute;left:23.5px;top:284.65999999999997px" width="10" height="8" viewBox="0 0 10 8"><path d="M0.5 2h3l1 1h4v4.5h-8z" fill="#f0c060" stroke="#c08a30" stroke-width="0.7"/><rect x="3" y="0.5" width="5" height="4" fill="#f3e2c4" stroke="#9b6a3a" stroke-width="0.8"/><path d="M5.5 0.5v4M3 2.5h5" stroke="#9b6a3a" stroke-width="0.7"/></svg><div class="ui" style="left:34.5px;top:283.26px;font-size:9.2px;letter-spacing:0.246px;transform:scaleX(0.8);transform-origin:0 0;color:#1a1a2e">SourceFolder</div><svg style="position:absolute;left:25px;top:296.94px" width="8" height="9" viewBox="0 0 8 9"><path d="M0.5 0.5h4.5l2 2v6h-6.5z" fill="#f2f5fa" stroke="#b4bccb" stroke-width="0.8"/><path d="M2 4h3M2 6h3" stroke="#8aa0c8" stroke-width="0.7"/></svg><div class="ui" style="left:34.5px;top:295.54px;font-size:9.2px;letter-spacing:0.531px;transform:scaleX(0.8);transform-origin:0 0;color:#1a1a2e">Concentration</div><svg style="position:absolute;left:25px;top:309.21999999999997px" width="8" height="9" viewBox="0 0 8 9"><path d="M0.5 0.5h4.5l2 2v6h-6.5z" fill="#f2f5fa" stroke="#b4bccb" stroke-width="0.8"/><path d="M2 4h3M2 6h3" stroke="#8aa0c8" stroke-width="0.7"/></svg><div class="ui" style="left:34.5px;top:307.82px;font-size:9.2px;letter-spacing:0.186px;transform:scaleX(0.8);transform-origin:0 0;color:#1a1a2e">Grades</div><svg style="position:absolute;left:25px;top:321.5px" width="8" height="9" viewBox="0 0 8 9"><path d="M0.5 0.5h4.5l2 2v6h-6.5z" fill="#f2f5fa" stroke="#b4bccb" stroke-width="0.8"/><path d="M2 4h3M2 6h3" stroke="#8aa0c8" stroke-width="0.7"/></svg><div class="ui" style="left:34.5px;top:320.1px;font-size:9.2px;letter-spacing:0.258px;transform:scaleX(0.8);transform-origin:0 0;color:#1a1a2e">names</div><svg style="position:absolute;left:25px;top:333.78px" width="8" height="9" viewBox="0 0 8 9"><path d="M0.5 0.5h4.5l2 2v6h-6.5z" fill="#f2f5fa" stroke="#b4bccb" stroke-width="0.8"/><path d="M2 4h3M2 6h3" stroke="#8aa0c8" stroke-width="0.7"/></svg><div class="ui" style="left:34.5px;top:332.38px;font-size:9.2px;letter-spacing:0.280px;transform:scaleX(0.8);transform-origin:0 0;color:#1a1a2e">names2</div><svg style="position:absolute;left:25px;top:346.06px" width="8" height="9" viewBox="0 0 8 9"><path d="M0.5 0.5h4.5l2 2v6h-6.5z" fill="#f2f5fa" stroke="#b4bccb" stroke-width="0.8"/><path d="M2 4h3M2 6h3" stroke="#8aa0c8" stroke-width="0.7"/></svg><div class="ui" style="left:34.5px;top:344.66px;font-size:9.2px;letter-spacing:0.149px;transform:scaleX(0.8);transform-origin:0 0;color:#1a1a2e">Resistivity</div><svg style="position:absolute;left:25px;top:358.34px" width="8" height="9" viewBox="0 0 8 9"><path d="M0.5 0.5h4.5l2 2v6h-6.5z" fill="#f2f5fa" stroke="#b4bccb" stroke-width="0.8"/><path d="M2 4h3M2 6h3" stroke="#8aa0c8" stroke-width="0.7"/></svg><div class="ui" style="left:34.5px;top:356.94px;font-size:9.2px;letter-spacing:0.313px;transform:scaleX(0.8);transform-origin:0 0;color:#1a1a2e">test1.txt</div><svg style="position:absolute;left:25px;top:370.62px" width="8" height="9" viewBox="0 0 8 9"><path d="M0.5 0.5h4.5l2 2v6h-6.5z" fill="#f2f5fa" stroke="#b4bccb" stroke-width="0.8"/><path d="M2 4h3M2 6h3" stroke="#8aa0c8" stroke-width="0.7"/></svg><div class="ui" style="left:34.5px;top:369.22px;font-size:9.2px;letter-spacing:0.313px;transform:scaleX(0.8);transform-origin:0 0;color:#1a1a2e">test2.txt</div><svg style="position:absolute;left:25px;top:382.9px" width="8" height="9" viewBox="0 0 8 9"><path d="M0.5 0.5h4.5l2 2v6h-6.5z" fill="#f2f5fa" stroke="#b4bccb" stroke-width="0.8"/><path d="M2 4h3M2 6h3" stroke="#8aa0c8" stroke-width="0.7"/></svg><div class="ui" style="left:34.5px;top:381.5px;font-size:9.2px;letter-spacing:0.572px;transform:scaleX(0.8);transform-origin:0 0;color:#1a1a2e">wordLength</div><svg style="position:absolute;left:4px;top:397.18px" width="6" height="4" viewBox="0 0 6 4"><path d="M0.5 0.5L3 3l2.5-2.5" stroke="#6b6b6b" stroke-width="1" fill="none"/></svg><svg style="position:absolute;left:13.5px;top:394.68px" width="10" height="9" viewBox="0 0 10 9"><path d="M0.5 2.5h3l1 1h3v5h-7z" fill="#f0c060" stroke="#c08a30" stroke-width="0.7"/><path d="M2 5h7.5l-1.5 3.5H0.5z" fill="#a9cdea" stroke="#5a8ab8" stroke-width="0.6"/><path d="M8 0v3.5l-2 0.5" stroke="#2a5aa8" stroke-width="1" fill="none"/></svg><div class="ui" style="left:24.5px;top:393.78000000000003px;font-size:9.2px;letter-spacing:0.281px;transform:scaleX(0.8);transform-origin:0 0;color:#1a1a2e">Java by Deviec</div><svg style="position:absolute;left:16px;top:408.46px" width="4" height="6" viewBox="0 0 4 6"><path d="M0.5 0.5L3 3L0.5 5.5" stroke="#a4a4a4" stroke-width="0.9" fill="none"/></svg><svg style="position:absolute;left:23.5px;top:408.46px" width="9" height="6" viewBox="0 0 9 6"><rect x="0" y="3.5" width="6" height="2.5" fill="#b84a2a"/><rect x="0" y="0.5" width="5" height="3" fill="#2f8a6a"/><path d="M5.5 6L7 0.5h1L9 6z" fill="#e8962a"/></svg><div class="ui" style="left:34.5px;top:406.06px;font-size:9.2px;letter-spacing:0.073px;transform:scaleX(0.8);transform-origin:0 0;color:#1a1a2e">JRE System Library<span style="color:#a0906a"> [JavaSE 1.8]</span></div><svg style="position:absolute;left:14px;top:421.73999999999995px" width="6" height="4" viewBox="0 0 6 4"><path d="M0.5 0.5L3 3l2.5-2.5" stroke="#6b6b6b" stroke-width="1" fill="none"/></svg><svg style="position:absolute;left:23.5px;top:419.73999999999995px" width="10" height="8" viewBox="0 0 10 8"><path d="M0.5 2h3l1 1h4v4.5h-8z" fill="#f0c060" stroke="#c08a30" stroke-width="0.7"/><rect x="3" y="0.5" width="5" height="4" fill="#f3e2c4" stroke="#9b6a3a" stroke-width="0.8"/><path d="M5.5 0.5v4M3 2.5h5" stroke="#9b6a3a" stroke-width="0.7"/></svg><div class="ui" style="left:34.5px;top:418.34px;font-size:9.2px;letter-spacing:-0.333px;transform:scaleX(0.8);transform-origin:0 0;color:#1a1a2e">src</div><svg style="position:absolute;left:26px;top:433.02px" width="4" height="6" viewBox="0 0 4 6"><path d="M0.5 0.5L3 3L0.5 5.5" stroke="#a4a4a4" stroke-width="0.9" fill="none"/></svg><svg style="position:absolute;left:33.5px;top:432.02px" width="9" height="8" viewBox="0 0 9 8"><rect x="2.5" y="0.5" width="5.5" height="7" fill="#f6ead6" stroke="#a77848" stroke-width="0.9"/><path d="M5.25 0.5v7M2.5 3h5.5M2.5 5.3h5.5" stroke="#a77848" stroke-width="0.8"/><ellipse cx="2" cy="6.3" rx="2" ry="1.7" fill="#f0b848"/></svg><div class="ui" style="left:44.5px;top:430.62px;font-size:9.2px;letter-spacing:0.455px;transform:scaleX(0.8);transform-origin:0 0;color:#1a1a2e">(default package)</div><svg style="position:absolute;left:26px;top:445.29999999999995px" width="4" height="6" viewBox="0 0 4 6"><path d="M0.5 0.5L3 3L0.5 5.5" stroke="#a4a4a4" stroke-width="0.9" fill="none"/></svg><svg style="position:absolute;left:33.5px;top:444.29999999999995px" width="9" height="8" viewBox="0 0 9 8"><rect x="2.5" y="0.5" width="5.5" height="7" fill="#f6ead6" stroke="#a77848" stroke-width="0.9"/><path d="M5.25 0.5v7M2.5 3h5.5M2.5 5.3h5.5" stroke="#a77848" stroke-width="0.8"/></svg><div class="ui" style="left:44.5px;top:442.9px;font-size:9.2px;letter-spacing:0.388px;transform:scaleX(0.8);transform-origin:0 0;color:#1a1a2e">carDemo</div><svg style="position:absolute;left:26px;top:457.5799999999999px" width="4" height="6" viewBox="0 0 4 6"><path d="M0.5 0.5L3 3L0.5 5.5" stroke="#a4a4a4" stroke-width="0.9" fill="none"/></svg><svg style="position:absolute;left:33.5px;top:456.5799999999999px" width="9" height="8" viewBox="0 0 9 8"><rect x="2.5" y="0.5" width="5.5" height="7" fill="#f6ead6" stroke="#a77848" stroke-width="0.9"/><path d="M5.25 0.5v7M2.5 3h5.5M2.5 5.3h5.5" stroke="#a77848" stroke-width="0.8"/><ellipse cx="2" cy="6.3" rx="2" ry="1.7" fill="#f0b848"/></svg><div class="ui" style="left:44.5px;top:455.17999999999995px;font-size:9.2px;letter-spacing:0.545px;transform:scaleX(0.8);transform-origin:0 0;color:#1a1a2e">fileDemo</div></div><div style="position:absolute;left:193px;top:48px;width:577px;height:487px;background:#e3e8f4;border:1px solid #b4b8c2;border-bottom:none"></div><div style="position:absolute;left:759px;top:48.5px;width:4px;height:2px;background:#a0a0a0"></div><div style="position:absolute;left:765px;top:48.5px;width:3px;height:3px;background:#a0a0a0"></div><div style="position:absolute;left:194px;top:54px;width:80px;height:480px;background:#fff;border:1px solid #fff;border-top-color:#d4d9e4;border-radius:4px 4px 0 0"></div><div style="position:absolute;left:196px;top:55px;width:57px;height:15px;background:linear-gradient(#dfe6ee,#ffffff);border-radius:3px 3px 0 0"></div><div style="position:absolute;left:253px;top:55px;width:20px;height:15px;background:#f3f5f9;border-radius:0 3px 0 0"></div><svg style="position:absolute;left:197.5px;top:58px" width="8" height="10" viewBox="0 0 8 10"><path d="M0.5 0.5h4.2l2 2v6h-6.2z" fill="#f4f7fb" stroke="#bf9c58" stroke-width="0.8"/><path d="M4.2 2.5v3.8c0 1.1-0.9 1.3-1.9 0.9" stroke="#2a5aa8" stroke-width="1.1" fill="none"/><path d="M-0.5 9.5l2-3.3 2 3.3z" fill="#f0b828"/></svg><div class="ui" style="left:207.5px;top:57.5px;font-size:9.2px;letter-spacing:0.043px;transform:scaleX(0.8);transform-origin:0 0;color:#1a1a3a">Exercis..</div><svg style="position:absolute;left:243px;top:59px" width="7" height="7" viewBox="0 0 7 7"><path d="M1 1l5 5M6 1l-5 5" stroke="#8a8a8a" stroke-width="2.2"/><path d="M1 1l5 5M6 1l-5 5" stroke="#fff" stroke-width="0.7"/></svg><svg style="position:absolute;left:257px;top:57.5px" width="9" height="9" viewBox="0 0 9 9"><path d="M0.5 0.5l2 1.8-2 1.8M3 0.5l2 1.8-2 1.8" stroke="#111" stroke-width="1" fill="none"/><path d="M8 4.5H6.2v1.6h1.2a1.2 1.2 0 0 1 0 2.4H6" stroke="#7a3a5a" stroke-width="0.9" fill="none"/></svg><div style="position:absolute;left:196px;top:71px;width:58px;height:450px;background:#fff"></div><div style="position:absolute;left:196px;top:71px;width:7px;height:450px;background:#f7f7f7"></div><div style="position:absolute;left:254px;top:71px;width:10px;height:450px;background:#f0f0f0"></div><svg style="position:absolute;left:256px;top:75px" width="7" height="5" viewBox="0 0 7 5"><path d="M0.5 4L3.5 1l3 3" stroke="#555" stroke-width="1" fill="none"/></svg><div style="position:absolute;left:254px;top:90px;width:10px;height:27px;background:#c8c8c8"></div><svg style="position:absolute;left:256px;top:513px" width="7" height="5" viewBox="0 0 7 5"><path d="M0.5 1L3.5 4l3-3" stroke="#555" stroke-width="1" fill="none"/></svg><div style="position:absolute;left:264px;top:71px;width:9px;height:461px;background:#f6f6f6"></div><div style="position:absolute;left:225px;top:71px;width:1px;height:450px;background:#f3f3f3"></div><div style="position:absolute;left:266px;top:74px;width:5px;height:4px;background:#f2c12e"></div><div style="position:absolute;left:266px;top:87px;width:5px;height:3px;border:1px solid #f2c12e"></div><div style="position:absolute;left:266px;top:128px;width:5px;height:3px;border:1px solid #f2c12e"></div><div style="position:absolute;left:266px;top:428px;width:5px;height:3px;border:1px solid #f2c12e"></div><div style="position:absolute;left:196px;top:521px;width:30px;height:11px;background:#f8f8f8"></div><div style="position:absolute;left:226px;top:521.6px;width:39px;height:10.4px;background:#f0f0f0"></div><svg style="position:absolute;left:229px;top:524px" width="4" height="6" viewBox="0 0 4 6"><path d="M3.5 0.5L0.5 3l3 2.5" stroke="#555" stroke-width="1" fill="none"/></svg><svg style="position:absolute;left:247px;top:524px" width="4" height="6" viewBox="0 0 4 6"><path d="M0.5 0.5L3.5 3l-3 2.5" stroke="#555" stroke-width="1" fill="none"/></svg><div style="position:absolute;left:196px;top:71px;width:58px;height:450px;overflow:hidden"><div class="mono ln" style="left:0;top:2.17px;width:24px;text-align:right">12</div><div class="mono" style="left:31px;top:2.17px"><span class="k">int</span>[]</div><div class="mono ln" style="left:0;top:14.43px;width:24px;text-align:right">13</div><div class="mono" style="left:31px;top:14.43px"><span class="k">for</span> (</div><div class="mono ln" style="left:0;top:26.69px;width:24px;text-align:right">14</div><div class="mono" style="left:31px;top:26.69px">    <span class="v">c</span></div><div class="mono ln" style="left:0;top:38.95px;width:24px;text-align:right">15</div><div class="mono" style="left:31px;top:38.95px">}</div><div class="mono ln" style="left:0;top:51.21px;width:24px;text-align:right">16</div><div class="mono" style="left:31px;top:51.21px">Syste</div><div class="mono ln" style="left:0;top:63.47px;width:24px;text-align:right">17</div><div class="mono" style="left:31px;top:63.47px"><span style="font-style:italic">mirro</span></div><div class="mono ln" style="left:0;top:75.73px;width:24px;text-align:right">18</div><div class="mono" style="left:31px;top:75.73px"></div><div class="mono ln" style="left:0;top:87.99px;width:24px;text-align:right">19</div><div class="mono" style="left:31px;top:87.99px"></div><div class="mono ln" style="left:0;top:100.25px;width:24px;text-align:right">20</div><div class="mono" style="left:31px;top:100.25px"><span class="c">xerci</span></div><div class="mono ln" style="left:0;top:112.51px;width:24px;text-align:right">21</div><div class="mono" style="left:31px;top:112.51px"><span class="k">ic st</span></div><div class="mono ln" style="left:0;top:124.77px;width:24px;text-align:right">22</div><div class="mono" style="left:31px;top:124.77px">Queue</div><div class="mono ln" style="left:0;top:137.03px;width:24px;text-align:right">23</div><div class="mono" style="left:31px;top:137.03px"><span class="k">int</span> <span class="v">s</span></div><div class="mono ln" style="left:0;top:149.29px;width:24px;text-align:right">24</div><div class="mono" style="left:31px;top:149.29px"><span class="k">for</span> (</div><div class="mono ln" style="left:0;top:161.55px;width:24px;text-align:right">25</div><div class="mono" style="left:31px;top:161.55px">    <span class="v">a</span></div><div class="mono ln" style="left:0;top:173.81px;width:24px;text-align:right">26</div><div class="mono" style="left:31px;top:173.81px">}</div><div class="mono ln" style="left:0;top:186.07px;width:24px;text-align:right">27</div><div class="mono" style="left:31px;top:186.07px"><span class="k">for</span> (</div><div class="mono ln" style="left:0;top:198.33px;width:24px;text-align:right">28</div><div class="mono" style="left:31px;top:198.33px">    <span class="k">i</span></div><div class="mono ln" style="left:0;top:210.59px;width:24px;text-align:right">29</div><div class="mono" style="left:31px;top:210.59px">    <span class="k">i</span></div><div class="mono ln" style="left:0;top:222.85px;width:24px;text-align:right">30</div><div class="mono" style="left:31px;top:222.85px"></div><div class="mono ln" style="left:0;top:235.11px;width:24px;text-align:right">31</div><div class="mono" style="left:31px;top:235.11px"></div><div class="mono ln" style="left:0;top:247.37px;width:24px;text-align:right">32</div><div class="mono" style="left:31px;top:247.37px">    }</div><div class="mono ln" style="left:0;top:259.63px;width:24px;text-align:right">33</div><div class="mono" style="left:31px;top:259.63px"></div><div class="mono ln" style="left:0;top:271.89px;width:24px;text-align:right">34</div><div class="mono" style="left:31px;top:271.89px"></div><div class="mono ln" style="left:0;top:284.15px;width:24px;text-align:right">35</div><div class="mono" style="left:31px;top:284.15px">    }</div><div class="mono ln" style="left:0;top:296.41px;width:24px;text-align:right">36</div><div class="mono" style="left:31px;top:296.41px">}</div><div class="mono ln" style="left:0;top:308.67px;width:24px;text-align:right">37</div><div class="mono" style="left:31px;top:308.67px"><span class="k">for</span> (</div><div class="mono ln" style="left:0;top:320.93px;width:24px;text-align:right">38</div><div class="mono" style="left:31px;top:320.93px">    <span class="v">s</span></div><div class="mono ln" style="left:0;top:333.19px;width:24px;text-align:right">39</div><div class="mono" style="left:31px;top:333.19px">}</div><div class="mono ln" style="left:0;top:345.45px;width:24px;text-align:right">40</div><div class="mono" style="left:31px;top:345.45px">Syste</div><div class="mono ln" style="left:0;top:357.71px;width:24px;text-align:right">41</div><div class="mono" style="left:31px;top:357.71px"></div><div class="mono ln" style="left:0;top:369.97px;width:24px;text-align:right">42</div><div class="mono" style="left:31px;top:369.97px"></div><div class="mono ln" style="left:0;top:382.23px;width:24px;text-align:right">43</div><div class="mono" style="left:31px;top:382.23px"><span class="c">xerci</span></div><div class="mono ln" style="left:0;top:394.49px;width:24px;text-align:right">44</div><div class="mono" style="left:31px;top:394.49px"><span class="k">ic st</span></div><div class="mono ln" style="left:0;top:406.75px;width:24px;text-align:right">45</div><div class="mono" style="left:31px;top:406.75px">Queue</div><div class="mono ln" style="left:0;top:419.01px;width:24px;text-align:right">46</div><div class="mono" style="left:31px;top:419.01px">Stack</div><div class="mono ln" style="left:0;top:431.27px;width:24px;text-align:right">47</div><div class="mono" style="left:31px;top:431.27px"><span class="k">int</span> <span class="v">s</span></div><div class="mono ln" style="left:0;top:443.53px;width:24px;text-align:right">48</div><div class="mono" style="left:31px;top:443.53px"></div></div><svg style="position:absolute;left:220.5px;top:185.14px" width="5" height="5" viewBox="0 0 5 5"><circle cx="2.5" cy="2.5" r="2" fill="#fff" stroke="#9ab" stroke-width="0.8"/><path d="M1 2.5h3" stroke="#9ab" stroke-width="0.8"/></svg><svg style="position:absolute;left:220.5px;top:467.12px" width="5" height="5" viewBox="0 0 5 5"><circle cx="2.5" cy="2.5" r="2" fill="#fff" stroke="#9ab" stroke-width="0.8"/><path d="M1 2.5h3" stroke="#9ab" stroke-width="0.8"/></svg><div style="position:absolute;left:274px;top:54px;width:496px;height:480px;background:#fff;border:2px solid #e0e4f4;border-top:1px solid #c9ccd6;border-right:1px solid #b4b8c2;border-radius:4px 4px 0 0"></div><div style="position:absolute;left:276px;top:55px;width:493px;height:15px;background:#cfdeee;border-radius:3px 3px 0 0"></div><div style="position:absolute;left:545px;top:55px;width:73px;height:16px;background:#fff;border-radius:3px 3px 0 0"></div><svg style="position:absolute;left:278.5px;top:58px" width="8" height="10" viewBox="0 0 8 10"><path d="M0.5 0.5h4.2l2 2v6h-6.2z" fill="#f4f7fb" stroke="#bf9c58" stroke-width="0.8"/><path d="M4.2 2.5v3.8c0 1.1-0.9 1.3-1.9 0.9" stroke="#2a5aa8" stroke-width="1.1" fill="none"/><path d="M-0.5 9.5l2-3.3 2 3.3z" fill="#f0b828"/></svg><div class="ui" style="left:289px;top:57.5px;font-size:9.2px;letter-spacing:0.266px;transform:scaleX(0.8);transform-origin:0 0;color:#1a1a3a">Advanced.java</div><svg style="position:absolute;left:358.5px;top:58px" width="8" height="10" viewBox="0 0 8 10"><path d="M0.5 0.5h4.2l2 2v6h-6.2z" fill="#f4f7fb" stroke="#bf9c58" stroke-width="0.8"/><path d="M4.2 2.5v3.8c0 1.1-0.9 1.3-1.9 0.9" stroke="#2a5aa8" stroke-width="1.1" fill="none"/></svg><div class="ui" style="left:367px;top:57.5px;font-size:9.2px;letter-spacing:0.270px;transform:scaleX(0.8);transform-origin:0 0;color:#1a1a3a">ArrayIntListIterator.java</div><svg style="position:absolute;left:466.5px;top:58px" width="8" height="10" viewBox="0 0 8 10"><path d="M0.5 0.5h4.2l2 2v6h-6.2z" fill="#f4f7fb" stroke="#bf9c58" stroke-width="0.8"/><path d="M4.2 2.5v3.8c0 1.1-0.9 1.3-1.9 0.9" stroke="#2a5aa8" stroke-width="1.1" fill="none"/></svg><div class="ui" style="left:475px;top:57.5px;font-size:9.2px;letter-spacing:0.242px;transform:scaleX(0.8);transform-origin:0 0;color:#1a1a3a">ArrayIntList.java</div><svg style="position:absolute;left:548.5px;top:58px" width="8" height="10" viewBox="0 0 8 10"><path d="M0.5 0.5h4.2l2 2v6h-6.2z" fill="#f4f7fb" stroke="#bf9c58" stroke-width="0.8"/><path d="M4.2 2.5v3.8c0 1.1-0.9 1.3-1.9 0.9" stroke="#2a5aa8" stroke-width="1.1" fill="none"/></svg><div class="ui" style="left:557.5px;top:57.5px;font-size:9.2px;letter-spacing:-0.080px;transform:scaleX(0.8);transform-origin:0 0;color:#1a1a3a">Exercises.java</div><svg style="position:absolute;left:608px;top:59px" width="7" height="7" viewBox="0 0 7 7"><path d="M1 1l5 5M6 1l-5 5" stroke="#8a8a8a" stroke-width="2.2"/><path d="M1 1l5 5M6 1l-5 5" stroke="#fff" stroke-width="0.7"/></svg><div style="position:absolute;left:276px;top:71px;width:473px;height:450px;background:#fff"></div><div style="position:absolute;left:276px;top:71px;width:8px;height:450px;background:#f4f4f4"></div><svg style="position:absolute;left:277px;top:116px" width="7" height="369" viewBox="0 0 7 369"><defs><radialGradient id="wg"><stop offset="0" stop-color="#fff" stop-opacity="1"/><stop offset="0.45" stop-color="#fff" stop-opacity="0.75"/><stop offset="1" stop-color="#fff" stop-opacity="0"/></radialGradient><pattern id="qd" width="7" height="16.6" patternUnits="userSpaceOnUse" y="7"><rect width="7" height="16.6" fill="#1577dc"/><ellipse cx="7" cy="4.15" rx="5.5" ry="6.5" fill="url(#wg)"/><ellipse cx="0" cy="12.45" rx="5.5" ry="6.5" fill="url(#wg)"/><ellipse cx="0" cy="-4.15" rx="5.5" ry="6.5" fill="url(#wg)"/><ellipse cx="7" cy="20.75" rx="5.5" ry="6.5" fill="url(#wg)"/></pattern></defs><rect width="7" height="369" fill="url(#qd)"/><rect width="7" height="1" fill="#0a6ad8"/></svg><div style="position:absolute;left:284px;top:71px;width:16px;height:450px;background:#fdfdfd"></div><div style="position:absolute;left:300px;top:71px;width:1px;height:450px;background:#f1f1f1"></div><div style="position:absolute;left:302px;top:300px;width:447px;height:12.26px;background:#e8f2fe"></div><div style="position:absolute;left:276px;top:71px;width:473px;height:450px;overflow:hidden"><div class="mono ln" style="left:0;top:-13.91px;width:20px;text-align:right">3</div><div class="mono" style="left:26px;top:-13.91px"></div><div class="mono ln" style="left:0;top:-1.65px;width:20px;text-align:right">4</div><div class="mono" style="left:26px;top:-1.65px"><span class="c">// ArrayIntList classes.</span></div><div class="mono ln" style="left:0;top:10.61px;width:20px;text-align:right">5</div><div class="mono" style="left:26px;top:10.61px"></div><div class="mono ln" style="left:0;top:22.87px;width:20px;text-align:right">6</div><div class="mono" style="left:26px;top:22.87px"><span class="k">public</span> <span class="k">class</span> Exercises {</div><div class="mono ln" style="left:0;top:35.13px;width:20px;text-align:right">7</div><div class="mono" style="left:26px;top:35.13px"></div><div class="mono ln" style="left:0;top:47.39px;width:20px;text-align:right">8</div><div class="mono" style="left:26px;top:47.39px">    <span class="k">public</span> <span class="k">static</span> <span class="k">void</span> main(String[] <span class="v">args</span>) {</div><div class="mono ln" style="left:0;top:59.65px;width:20px;text-align:right">9</div><div class="mono" style="left:26px;top:59.65px">        <span class="k">int</span>[] <span class="v">array1</span> = { 11, -7, 3, 42, 3, 0, 14, 3 };</div><div class="mono ln" style="left:0;top:71.91px;width:20px;text-align:right">10</div><div class="mono" style="left:26px;top:71.91px"></div><div class="mono ln" style="left:0;top:84.17px;width:20px;text-align:right">11</div><div class="mono" style="left:26px;top:84.17px">        ArrayIntList <span class="v">list1</span> = <span class="k">new</span> ArrayIntList();</div><div class="mono ln" style="left:0;top:96.43px;width:20px;text-align:right">12</div><div class="mono" style="left:26px;top:96.43px"></div><div class="mono ln" style="left:0;top:108.69px;width:20px;text-align:right">13</div><div class="mono" style="left:26px;top:108.69px">        <span class="k">for</span> (<span class="k">int</span> <span class="v">i</span> : <span class="v">array1</span>) {</div><div class="mono ln" style="left:0;top:120.95px;width:20px;text-align:right">14</div><div class="mono" style="left:26px;top:120.95px">            <span class="v">list1</span>.add(<span class="v">i</span>);</div><div class="mono ln" style="left:0;top:133.21px;width:20px;text-align:right">15</div><div class="mono" style="left:26px;top:133.21px">        }</div><div class="mono ln" style="left:0;top:145.47px;width:20px;text-align:right">16</div><div class="mono" style="left:26px;top:145.47px"></div><div class="mono ln" style="left:0;top:157.73px;width:20px;text-align:right">17</div><div class="mono" style="left:26px;top:157.73px">        <span class="k">int</span>[] <span class="v">array2</span> = { 3, 42, 0 };</div><div class="mono ln" style="left:0;top:169.99px;width:20px;text-align:right">18</div><div class="mono" style="left:26px;top:169.99px"></div><div class="mono ln" style="left:0;top:182.25px;width:20px;text-align:right">19</div><div class="mono" style="left:26px;top:182.25px">        ArrayIntList <span class="v">list2</span> = <span class="k">new</span> ArrayIntList();</div><div class="mono ln" style="left:0;top:194.51px;width:20px;text-align:right">20</div><div class="mono" style="left:26px;top:194.51px"></div><div class="mono ln" style="left:0;top:206.77px;width:20px;text-align:right">21</div><div class="mono" style="left:26px;top:206.77px">        <span class="k">for</span> (<span class="k">int</span> <span class="v">i</span> : <span class="v">array2</span>) {</div><div class="mono ln" style="left:0;top:219.03px;width:20px;text-align:right">22</div><div class="mono" style="left:26px;top:219.03px">            <span class="v">list2</span>.add(<span class="v">i</span>);</div><div class="mono ln" style="left:0;top:231.29px;width:20px;text-align:right">23</div><div class="mono" style="left:26px;top:231.29px">        }</div><div class="mono ln" style="left:0;top:243.55px;width:20px;text-align:right">24</div><div class="mono" style="left:26px;top:243.55px"></div><div class="mono ln" style="left:0;top:255.81px;width:20px;text-align:right">25</div><div class="mono" style="left:26px;top:255.81px">        <span class="c">// Exercise 1</span></div><div class="mono ln" style="left:0;top:268.07px;width:20px;text-align:right">26</div><div class="mono" style="left:26px;top:268.07px">        System.<span class="f">out</span>.println(<span class="v">list1</span> + <span class="s">" "</span> + <span class="v">list2</span>);</div><div class="mono ln" style="left:0;top:280.33px;width:20px;text-align:right">27</div><div class="mono" style="left:26px;top:280.33px">        System.<span class="f">out</span>.println(<span class="v">list1</span>.lastIndexOf(-7));</div><div class="mono ln" style="left:0;top:292.59px;width:20px;text-align:right">28</div><div class="mono" style="left:26px;top:292.59px"></div><div class="mono ln" style="left:0;top:304.85px;width:20px;text-align:right">29</div><div class="mono" style="left:26px;top:304.85px">        <span class="c">// Exercise 2</span></div><div class="mono ln" style="left:0;top:317.11px;width:20px;text-align:right">30</div><div class="mono" style="left:26px;top:317.11px">        System.<span class="f">out</span>.println(<span class="v">list1</span>.indexOfSubList(<span class="v">list2</span>));</div><div class="mono ln" style="left:0;top:329.37px;width:20px;text-align:right">31</div><div class="mono" style="left:26px;top:329.37px"></div><div class="mono ln" style="left:0;top:341.63px;width:20px;text-align:right">32</div><div class="mono" style="left:26px;top:341.63px">        <span class="c">// Exercise 3</span></div><div class="mono ln" style="left:0;top:353.89px;width:20px;text-align:right">33</div><div class="mono" style="left:26px;top:353.89px">        <span class="v">list1</span>.replaceAll(3, 999);</div><div class="mono ln" style="left:0;top:366.15px;width:20px;text-align:right">34</div><div class="mono" style="left:26px;top:366.15px"></div><div class="mono ln" style="left:0;top:378.41px;width:20px;text-align:right">35</div><div class="mono" style="left:26px;top:378.41px">        <span class="c">// Exercise 4</span></div><div class="mono ln" style="left:0;top:390.67px;width:20px;text-align:right">36</div><div class="mono" style="left:26px;top:390.67px">        <span class="v">list1</span>.reverse();</div><div class="mono ln" style="left:0;top:402.93px;width:20px;text-align:right">37</div><div class="mono" style="left:26px;top:402.93px">    }</div><div class="mono ln" style="left:0;top:415.19px;width:20px;text-align:right">38</div><div class="mono" style="left:26px;top:415.19px"></div><div class="mono ln" style="left:0;top:427.45px;width:20px;text-align:right">39</div><div class="mono" style="left:26px;top:427.45px">}</div><div class="mono ln" style="left:0;top:439.71px;width:20px;text-align:right">40</div><div class="mono" style="left:26px;top:439.71px"></div><div class="mono ln" style="left:0;top:451.97px;width:20px;text-align:right">41</div><div class="mono" style="left:26px;top:451.97px"></div></div><div style="position:absolute;left:472px;top:276px;width:6px;height:12px;border:1px solid #9a4a80"></div><svg style="position:absolute;left:296px;top:118.02px" width="5" height="5" viewBox="0 0 5 5"><circle cx="2.5" cy="2.5" r="2" fill="#fff" stroke="#9ab" stroke-width="0.8"/><path d="M1 2.5h3" stroke="#9ab" stroke-width="0.8"/></svg><div style="position:absolute;left:749px;top:71px;width:10.5px;height:450px;background:#f0f0f0"></div><svg style="position:absolute;left:751px;top:76px" width="7" height="5" viewBox="0 0 7 5"><path d="M0.5 4L3.5 1l3 3" stroke="#555" stroke-width="1" fill="none"/></svg><div style="position:absolute;left:749px;top:118px;width:10.5px;height:392px;background:#a6a6a6"></div><svg style="position:absolute;left:751px;top:513px" width="7" height="5" viewBox="0 0 7 5"><path d="M0.5 1L3.5 4l3-3" stroke="#555" stroke-width="1" fill="none"/></svg><div style="position:absolute;left:759.5px;top:71px;width:9px;height:461px;background:#f7f7f7"></div><div style="position:absolute;left:276px;top:521px;width:25px;height:11px;background:#f8f8f8"></div><div style="position:absolute;left:301px;top:521.6px;width:459px;height:10.4px;background:#f0f0f0"></div><div style="position:absolute;left:195px;top:533px;width:574px;height:1px;background:#d2d2d2"></div><svg style="position:absolute;left:304px;top:523.5px" width="4" height="6" viewBox="0 0 4 6"><path d="M3.5 0.5L0.5 3l3 2.5" stroke="#bbb" stroke-width="1" fill="none"/></svg><svg style="position:absolute;left:741px;top:523.5px" width="4" height="6" viewBox="0 0 4 6"><path d="M0.5 0.5L3.5 3l-3 2.5" stroke="#bbb" stroke-width="1" fill="none"/></svg><div style="position:absolute;left:772px;top:48px;width:252px;height:486px;background:#fff;border:1px solid #cdd3e0;border-right:none;border-radius:4px 0 0 0"></div><div style="position:absolute;left:773px;top:49px;width:56px;height:15px;background:linear-gradient(#e3e9f1,#ffffff);border-radius:3px 3px 0 0"></div><div style="position:absolute;left:829px;top:49px;width:195px;height:15px;background:#f7f8fb"></div><svg style="position:absolute;left:776px;top:53px" width="8" height="8" viewBox="0 0 8 8"><rect x="0.5" y="0.5" width="7" height="6" rx="1" fill="#fff" stroke="#2a5aa8" stroke-width="1"/><rect x="0" y="6" width="8" height="2" fill="#2a5aa8"/><path d="M2 3h2" stroke="#8aa" stroke-width="0.8"/></svg><div class="ui" style="left:785px;top:51.5px;font-size:9.2px;letter-spacing:0.362px;transform:scaleX(0.8);transform-origin:0 0;color:#1a1a3a">Console</div><svg style="position:absolute;left:819px;top:53px" width="7" height="7" viewBox="0 0 7 7"><path d="M1 1l5 5M6 1l-5 5" stroke="#999" stroke-width="2.2"/><path d="M1 1l5 5M6 1l-5 5" stroke="#fff" stroke-width="0.7"/></svg><svg style="position:absolute;left:834px;top:52px" width="7" height="6" viewBox="0 0 7 6"><rect x="0" y="0" width="6.5" height="5.8" rx="1" fill="#b4b4b4"/></svg><svg style="position:absolute;left:846px;top:51.5px" width="8" height="7" viewBox="0 0 8 7"><path d="M1 1l6 5M7 1L1 6" stroke="#8a8a8a" stroke-width="2"/></svg><svg style="position:absolute;left:857px;top:51px" width="9" height="8" viewBox="0 0 9 8"><path d="M1 1l5 4.5M6 1L1 5.5M3 2.5l5 4.5M8 2.5L3 7" stroke="#7a7a7a" stroke-width="1.4"/></svg><div style="position:absolute;left:869px;top:50px;width:1px;height:10px;background:#d8d8d8"></div><svg style="position:absolute;left:874px;top:51px" width="9" height="9" viewBox="0 0 9 9"><rect x="0.5" y="0.5" width="5.5" height="7.5" fill="#a8c0e0" stroke="#8090b0" stroke-width="0.6"/><path d="M0.5 0.5h2.5v2.5" stroke="#c09040" stroke-width="1" fill="none"/><path d="M5 5l3 3M8 5L5 8" stroke="#888" stroke-width="1"/></svg><svg style="position:absolute;left:886px;top:51px" width="9" height="9" viewBox="0 0 9 9"><rect x="0.5" y="0.5" width="8" height="8" fill="#f4f6fa" stroke="#c8a050" stroke-width="0.8"/><rect x="0.5" y="0.5" width="8" height="1.5" fill="#c8a050"/><path d="M6 3v4" stroke="#3a6ab0" stroke-width="1"/><rect x="1" y="5" width="3.5" height="3.5" fill="#e8a830"/></svg><svg style="position:absolute;left:899px;top:51px" width="9" height="9" viewBox="0 0 9 9"><rect x="0.5" y="0.5" width="6" height="8" fill="#eef2f8" stroke="#c8c8c8" stroke-width="0.8"/><path d="M3 6l2-2 2 2M5 4v4" stroke="#e8b040" stroke-width="1.4" fill="none"/></svg><div style="position:absolute;left:909px;top:49px;width:25px;height:12px;background:#cde3fb"></div><div style="position:absolute;left:922px;top:49px;width:1px;height:12px;background:#b8d6f8"></div><svg style="position:absolute;left:911px;top:50.5px" width="10" height="9" viewBox="0 0 10 9"><path d="M2 0.5h7.5v5h-4l-2 2v-2H2z" fill="#fff" stroke="#4a7ab8" stroke-width="0.9"/><rect x="0" y="5" width="3.5" height="3.5" fill="#3a6ab0"/></svg><svg style="position:absolute;left:923.5px;top:50.5px" width="10" height="9" viewBox="0 0 10 9"><path d="M2 0.5h7.5v5h-4l-2 2v-2H2z" fill="#fff" stroke="#4a7ab8" stroke-width="0.9"/><path d="M4.5 1.5l3 3M7.5 1.5l-3 3" stroke="#e23" stroke-width="1"/><rect x="0" y="5" width="3.5" height="3.5" fill="#3a6ab0"/></svg><div style="position:absolute;left:934px;top:50px;width:1px;height:11px;background:#8a8a8a"></div><svg style="position:absolute;left:940px;top:51px" width="9" height="9" viewBox="0 0 9 9"><rect x="0.5" y="2.5" width="7.5" height="6" fill="#f4f6fa" stroke="#7a8aa8" stroke-width="0.8"/><rect x="0.5" y="2.5" width="7.5" height="1.5" fill="#4a7ac0"/><path d="M4 5.5L8 1.5" stroke="#2a9a3a" stroke-width="2"/></svg><svg style="position:absolute;left:953px;top:51px" width="8" height="9" viewBox="0 0 8 9"><rect x="0.5" y="0.5" width="7" height="6.5" rx="1.5" fill="#eaf0f8" stroke="#2a5aa8" stroke-width="1.1"/><rect x="1.5" y="7.5" width="5" height="1.5" fill="#2a5aa8"/><path d="M2.5 3h2" stroke="#6a8ab0" stroke-width="0.8"/></svg><svg style="position:absolute;left:965px;top:54px" width="6" height="4" viewBox="0 0 6 4"><path d="M0 0h6L3 3.5z" fill="#111"/></svg><svg style="position:absolute;left:975px;top:51px" width="9" height="9" viewBox="0 0 9 9"><rect x="0.5" y="1.5" width="7.5" height="7" fill="#fdf5d8" stroke="#c9a050" stroke-width="0.9"/><rect x="0.5" y="1.5" width="7.5" height="1.5" fill="#5a9ae0"/><circle cx="7" cy="2" r="1.6" fill="#f5c542"/></svg><svg style="position:absolute;left:988px;top:54px" width="6" height="4" viewBox="0 0 6 4"><path d="M0 0h6L3 3.5z" fill="#111"/></svg><svg style="position:absolute;left:998px;top:51.5px" width="6" height="4" viewBox="0 0 6 4"><path d="M0 0.5h6M0 3h6" stroke="#999" stroke-width="1"/></svg><div style="position:absolute;left:1010px;top:52px;width:7px;height:7px;border:1px solid #555;border-top-width:2px"></div><div style="position:absolute;left:773px;top:64px;width:249px;height:13px;overflow:hidden"><div class="ui" style="left:2px;top:0.5px;font-size:9.2px;letter-spacing:0.560px;transform:scaleX(0.8);transform-origin:0 0;color:#1a1a2e">&lt;terminated&gt;</div><div class="ui" style="left:55px;top:0.5px;font-size:9.2px;letter-spacing:0.010px;transform:scaleX(0.8);transform-origin:0 0;color:#1a1a2e">Exercises (8)</div><div class="ui" style="left:102px;top:0.5px;font-size:9.2px;letter-spacing:0.332px;transform:scaleX(0.8);transform-origin:0 0;color:#1a1a2e">[Java Application]</div><div class="ui" style="left:169px;top:0.5px;font-size:9.2px;letter-spacing:0.029px;transform:scaleX(0.8);transform-origin:0 0;color:#1a1a2e">C:&#8361;Program Files&#8361;Java</div></div><div style="position:absolute;left:773px;top:77px;width:238px;height:443px;overflow:hidden"><div class="mono" style="left:1.6px;top:1.57px">[11, -7, 3, 42, 3, 0, 14, 3] [3, 42, 0]</div><div class="mono" style="left:1.6px;top:13.83px">1</div><div class="mono" style="left:1.6px;top:26.09px">-1</div><div class="mono" style="left:1.6px;top:38.35px">[11, -7, 999, 42, 999, 0, 14, 999, 0, 0]</div><div class="mono" style="left:1.6px;top:50.61px">[I@7852e922</div><div class="mono" style="left:1.6px;top:62.87px">[0, 0, 999, 14, 0, 999, 42, 999, -7, 11]</div></div><div style="position:absolute;left:1011px;top:77px;width:11px;height:457px;background:#f0f0f0"></div><svg style="position:absolute;left:1013px;top:80px" width="7" height="5" viewBox="0 0 7 5"><path d="M0.5 4L3.5 1l3 3" stroke="#bbb" stroke-width="1" fill="none"/></svg><svg style="position:absolute;left:1013px;top:515px" width="7" height="4" viewBox="0 0 7 4"><path d="M0.5 1L3.5 4l3-3" stroke="#bbb" stroke-width="1" fill="none"/></svg><div style="position:absolute;left:773px;top:523.4px;width:238px;height:10.4px;background:#f0f0f0"></div><svg style="position:absolute;left:777px;top:525.5px" width="4" height="6" viewBox="0 0 4 6"><path d="M3.5 0.5L0.5 3l3 2.5" stroke="#bbb" stroke-width="1" fill="none"/></svg><svg style="position:absolute;left:1003px;top:525.5px" width="4" height="6" viewBox="0 0 4 6"><path d="M0.5 0.5L3.5 3l-3 2.5" stroke="#bbb" stroke-width="1" fill="none"/></svg><div style="position:absolute;left:0px;top:535px;width:1024px;height:14px;background:#e0e6f5"></div><div style="position:absolute;left:193px;top:535px;width:577px;height:1px;background:#c9ced9"></div><div style="position:absolute;left:638px;top:536px;width:1px;height:11px;background:#b5bac6"></div><div class="ui" style="left:643px;top:536px;font-size:9.2px;letter-spacing:0.495px;transform:scaleX(0.8);transform-origin:0 0;color:#1a1a3a">Writable</div><div style="position:absolute;left:702px;top:536px;width:1px;height:11px;background:#d8dce6"></div><div class="ui" style="left:706px;top:536px;font-size:9.2px;letter-spacing:0.309px;transform:scaleX(0.8);transform-origin:0 0;color:#1a1a3a">Smart Insert</div><div style="position:absolute;left:761px;top:536px;width:1px;height:11px;background:#d8dce6"></div><div class="ui" style="left:765px;top:536px;font-size:9.2px;letter-spacing:0.449px;transform:scaleX(0.8);transform-origin:0 0;color:#1a1a3a">23 : 10</div><div style="position:absolute;left:820px;top:535px;width:1px;height:13px;background:#d0d4de"></div><svg style="position:absolute;left:823px;top:537px" width="9" height="9" viewBox="0 0 9 9"><circle cx="4.5" cy="5" r="3.5" fill="#b9d3ea"/><path d="M2 3a3 3 0 0 1 5 0" stroke="#e0a92a" stroke-width="2" fill="none"/></svg><svg style="position:absolute;left:840px;top:536px" width="1" height="12" viewBox="0 0 1 12"><path d="M0.5 0v12" stroke="#999" stroke-dasharray="1 2"/></svg><div style="position:absolute;left:772px;top:534px;width:252px;height:1px;background:#fff"></div><svg style="position:absolute;left:1013px;top:539px" width="8" height="8" viewBox="0 0 8 8"><rect width="8" height="8" rx="1.5" fill="#f5901e"/><circle cx="3" cy="5" r="1.6" stroke="#fff" stroke-width="0.9" fill="none"/><circle cx="5.5" cy="2" r="0.9" fill="#fff"/><path d="M5.5 4v3" stroke="#fff" stroke-width="0.9"/></svg><div style="position:absolute;left:0px;top:549px;width:1024px;height:27px;background:#0b0a0f"></div><svg style="position:absolute;left:10px;top:557px" width="12" height="12" viewBox="0 0 12 12"><path d="M0 1.7L4.9 1v4.7H0zM5.5 0.9L12 0v5.7H5.5zM0 6.3h4.9V11L0 10.3zM5.5 6.3H12V12l-6.5-0.9z" fill="#fff"/></svg><svg style="position:absolute;left:43px;top:557px" width="12" height="12" viewBox="0 0 12 12"><circle cx="7.5" cy="4.5" r="3.5" stroke="#fff" stroke-width="1.1" fill="none"/><path d="M5 7L1 11" stroke="#fff" stroke-width="1.3"/></svg><svg style="position:absolute;left:74px;top:557px" width="12" height="12" viewBox="0 0 12 12"><rect x="0.5" y="3" width="8" height="6" stroke="#fff" fill="none"/><path d="M0 1h8M0 11h8M10.5 1v10" stroke="#fff" stroke-width="1"/></svg><svg style="position:absolute;left:107px;top:556px" width="14" height="14" viewBox="0 0 14 14"><path d="M12.5 7.5H3.5c0.3 2.5 2 3.8 4.3 3.8 1.6 0 3-0.5 4.2-1.3v2.6c-1.2 0.7-2.7 1.1-4.4 1.1C3.5 13.7 1 11 1 7.2 1 3.3 3.6 0.5 7.4 0.5c3.3 0 5.3 2.3 5.3 5.8zM3.7 5.6h6.2C9.8 4 8.8 3 7.1 3 5.4 3 4.1 4.1 3.7 5.6z" fill="#1e8ae6"/></svg><svg style="position:absolute;left:140px;top:556px" width="15" height="15" viewBox="0 0 15 15"><circle cx="7.5" cy="7.5" r="7.2" fill="#db4437"/><path d="M7.5 7.5L1.2 4A7.2 7.2 0 0 1 13.8 4z" fill="#db4437"/><path d="M7.5 7.5L13.8 4A7.2 7.2 0 0 1 7.5 14.7z" fill="#f4c20d"/><path d="M7.5 7.5V14.7A7.2 7.2 0 0 1 1.2 4z" fill="#0f9d58"/><circle cx="7.5" cy="7.5" r="3.3" fill="#fff"/><circle cx="7.5" cy="7.5" r="2.5" fill="#4285f4"/></svg><svg style="position:absolute;left:173px;top:556px" width="15" height="14" viewBox="0 0 15 14"><path d="M0.5 1h5l1.5 2h7.5v10.5H0.5z" fill="#f7d774"/><rect x="0.5" y="4" width="14.5" height="9.5" fill="#ffe49a"/><rect x="4" y="8" width="7" height="5.5" fill="#3a9ad9"/><rect x="5.5" y="9.5" width="4" height="4" fill="#ffe49a"/></svg><svg style="position:absolute;left:207px;top:557px" width="12" height="12" viewBox="0 0 12 12"><circle cx="6" cy="6" r="3.3" stroke="#fff" stroke-width="1.6" fill="none"/><path d="M6 0.3v2.2M6 9.5v2.2M0.3 6h2.2M9.5 6h2.2M2 2l1.5 1.5M8.5 8.5L10 10M10 2L8.5 3.5M3.5 8.5L2 10" stroke="#fff" stroke-width="1.8"/></svg><svg style="position:absolute;left:240px;top:556.5px" width="12" height="13" viewBox="0 0 12 13"><path d="M0 0h12v12.5H0z" fill="#fff"/><path d="M6.5 12.5L12 7v5.5z" fill="#000"/><path d="M6.5 12.5V7H12" stroke="#fff" stroke-width="0.8" fill="none"/></svg><svg style="position:absolute;left:271px;top:555px" width="17" height="16" viewBox="0 0 17 16"><rect x="0" y="0" width="17" height="16" fill="#7a2fbf"/><rect x="1.5" y="3" width="8" height="10" fill="#fff"/><path d="M3.3 11V5l3.4 6V5" stroke="#7a2fbf" stroke-width="1.5" fill="none"/><path d="M10.5 2v12M12.5 3h3v3M12.5 7h3v3M12.5 11h3" stroke="#fff" stroke-width="1.1" fill="none"/></svg><div style="position:absolute;left:296px;top:549px;width:33px;height:27px;background:#3a3a3c"></div><svg style="position:absolute;left:304px;top:554px" width="17" height="17" viewBox="0 0 17 17"><circle cx="8.5" cy="8.5" r="8" fill="#2c2255"/><path d="M2 6.5h13M1.2 8.5h14.6M2 10.5h13" stroke="#fff" stroke-width="1.1"/><path d="M5 1.2A8 8 0 0 0 5 15.8" stroke="#f7941e" stroke-width="1.6" fill="none"/></svg><svg style="position:absolute;left:337px;top:555px" width="16" height="15" viewBox="0 0 16 15"><ellipse cx="7" cy="9" rx="6.5" ry="5.5" fill="#d8e8f2"/><circle cx="4" cy="7" r="1.3" fill="#e53"/><circle cx="6.5" cy="5" r="1.3" fill="#4a4"/><circle cx="9" cy="6" r="1.3" fill="#36c"/><circle cx="3.5" cy="10.5" r="1.3" fill="#fc3"/><path d="M8 13L15 1" stroke="#e8a23a" stroke-width="2"/></svg><div style="position:absolute;left:101px;top:574px;width:27px;height:2px;background:#8a8a8a"></div><div style="position:absolute;left:134px;top:574px;width:27px;height:2px;background:#8a8a8a"></div><div style="position:absolute;left:297px;top:574px;width:31px;height:2px;background:#aaa"></div><div style="position:absolute;left:332px;top:574px;width:27px;height:2px;background:#8a8a8a"></div><svg style="position:absolute;left:887px;top:559px" width="12" height="10" viewBox="0 0 12 10"><circle cx="4" cy="4" r="1.8" stroke="#fff" fill="none" stroke-width="0.9"/><circle cx="8" cy="2.5" r="1.8" stroke="#fff" fill="none" stroke-width="0.9"/><path d="M0.5 10c0-3 1.5-4 3.5-4s3 1 3 3M5 7c0.5-2 1.5-2.5 3-2.5s3.5 1 3.5 4" stroke="#fff" fill="none" stroke-width="0.9"/></svg><svg style="position:absolute;left:912px;top:561px" width="10" height="6" viewBox="0 0 10 6"><path d="M0.5 5.5L5 1l4.5 4.5" stroke="#fff" stroke-width="1" fill="none"/></svg><div class="ui" style="left:927px;top:555.5px;color:#fff;font-size:13px;letter-spacing:0">A</div><svg style="position:absolute;left:945.5px;top:552px" width="17" height="9" viewBox="0 0 17 9"><circle cx="3.7" cy="2.2" r="1.7" stroke="#fff" stroke-width="1" fill="none"/><path d="M3.7 3.9v2.2M0.3 6.6h7" stroke="#fff" stroke-width="1"/><path d="M8.6 1h3.4M10.3 1L8.5 4.2M10.3 1.6l1.9 2.6M14.5 0.2v5.4M12.8 2.6h1.7M9.6 5.4v2.8h5.6" stroke="#fff" stroke-width="0.95" fill="none"/></svg><div class="ui" style="left:964.5px;top:550.5px;font-size:9.2px;letter-spacing:0.025px;transform:scaleX(0.8);transform-origin:0 0;color:#fff">10:29</div><div class="ui" style="left:944px;top:563.5px;font-size:9.2px;letter-spacing:0.324px;transform:scaleX(0.8);transform-origin:0 0;color:#fff">2018-05-29</div><svg style="position:absolute;left:997px;top:555px" width="17" height="17" viewBox="0 0 17 17"><path d="M0.5 0.5h13v9h-5l-3 3v-3h-5z" fill="#fff"/><path d="M2.5 3h9M2.5 5h9M2.5 7h6" stroke="#333" stroke-width="0.8"/><circle cx="11" cy="12" r="4.2" fill="#111" stroke="#fff" stroke-width="0.8"/><text x="11" y="14.5" font-size="6.5" fill="#fff" text-anchor="middle" font-family="Liberation Sans">4</text></svg></body></html>
